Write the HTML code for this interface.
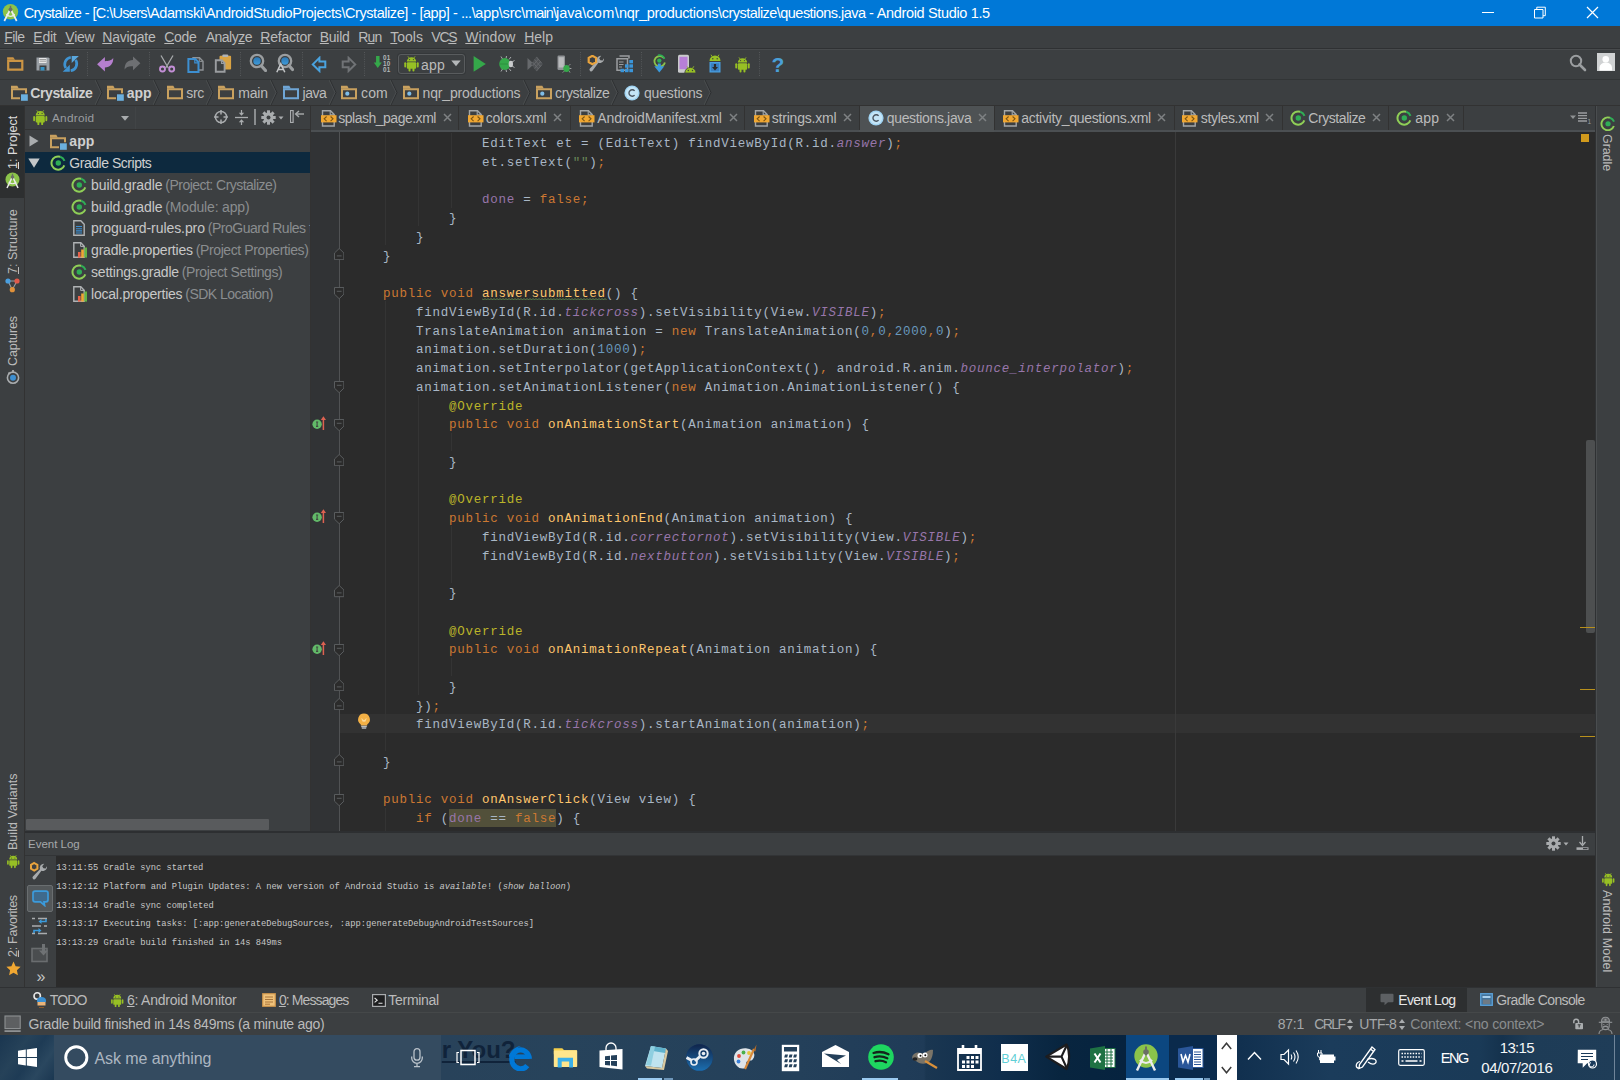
<!DOCTYPE html>
<html><head><meta charset="utf-8"><title>Crystalize - Android Studio 1.5</title>
<style>
html,body{margin:0;padding:0;}
body{width:1620px;height:1080px;overflow:hidden;position:relative;background:#3c3f41;font-family:"Liberation Sans",sans-serif;font-size:15px;color:#bbb;}
.t{position:absolute;white-space:pre;}
.r{position:absolute;}
u{text-decoration:underline;text-underline-offset:1px;text-decoration-thickness:1px;}

.code{font-family:"Liberation Mono",monospace;font-size:12.5px;letter-spacing:.75px;color:#a9b7c6;}
.cl{position:absolute;white-space:pre;line-height:18.75px;height:18.75px;}
.k{color:#cc7832}.f{color:#9876aa}.m{color:#ffc66d}.n{color:#6897bb}.a{color:#bbb529}.s{color:#6a8759}.i{font-style:italic}
.h{background:#52503a;padding:3.4px 0 1.3px;}
.w{}
</style></head><body>
<div class="r" style="left:0px;top:0px;width:1620px;height:26px;background:#0078d7;"></div>
<div class="r" style="left:0px;top:26px;width:1620px;height:1010px;background:#3c3f41;"></div>
<div class="r" style="left:0px;top:48px;width:1620px;height:1px;background:#2f3133;"></div>
<div class="r" style="left:0px;top:49px;width:1620px;height:1px;background:#484b4d;"></div>
<div class="r" style="left:0px;top:79px;width:1620px;height:1px;background:#323536;"></div>
<div class="r" style="left:0px;top:105px;width:1620px;height:1px;background:#323232;"></div>
<svg class="r" style="left:0px;top:0px;" width="24" height="26" viewBox="0 0 24 26"><circle cx="10.500" cy="11.800" r="7.700" fill="#8bc34a"/><path d="M10.500 9 L4.300 21 M10.500 9 L16.700 21" stroke="#ececec" stroke-width="1.700" fill="none"/><path d="M6.300 14.300 Q10.500 18.500 14.700 14.300" stroke="#ececec" stroke-width="1.300" fill="none"/><rect x="9.800" y="5.800" width="1.400" height="6" fill="#6b6f66"/><circle cx="10.500" cy="9.300" r="1.900" fill="#6b6f66"/></svg>
<span class="t" style="left:23.70px;top:4.18px;font-size:14.50px;line-height:19px;color:#fff;letter-spacing:-0.600px;">Crystalize - [C:\</span>
<span class="t" style="left:112.60px;top:4.18px;font-size:14.50px;line-height:19px;color:#fff;letter-spacing:-0.732px;">Users\</span>
<span class="t" style="left:150.10px;top:4.18px;font-size:14.50px;line-height:19px;color:#fff;letter-spacing:-0.466px;">Adamski\</span>
<span class="t" style="left:206.00px;top:4.18px;font-size:14.50px;line-height:19px;color:#fff;letter-spacing:-0.382px;">AndroidStudioProjects\</span>
<span class="t" style="left:345.10px;top:4.18px;font-size:14.50px;line-height:19px;color:#fff;letter-spacing:-0.447px;">Crystalize] - [app] - ...\</span>
<span class="t" style="left:475.30px;top:4.18px;font-size:14.50px;line-height:19px;color:#fff;letter-spacing:-0.230px;">app\</span>
<span class="t" style="left:502.60px;top:4.18px;font-size:14.50px;line-height:19px;color:#fff;letter-spacing:-0.214px;">src\</span>
<span class="t" style="left:525.10px;top:4.18px;font-size:14.50px;line-height:19px;color:#fff;letter-spacing:-0.911px;">main\</span>
<span class="t" style="left:556.00px;top:4.18px;font-size:14.50px;line-height:19px;color:#fff;letter-spacing:-0.066px;">java\</span>
<span class="t" style="left:586.30px;top:4.18px;font-size:14.50px;line-height:19px;color:#fff;letter-spacing:0.320px;">com\</span>
<span class="t" style="left:619.00px;top:4.18px;font-size:14.50px;line-height:19px;color:#fff;letter-spacing:-0.326px;">nqr_productions\</span>
<span class="t" style="left:721.80px;top:4.18px;font-size:14.50px;line-height:19px;color:#fff;letter-spacing:-0.542px;">crystalize\</span>
<span class="t" style="left:780.30px;top:4.18px;font-size:14.50px;line-height:19px;color:#fff;letter-spacing:-0.534px;">questions.java - </span>
<span class="t" style="left:876.80px;top:4.18px;font-size:14.50px;line-height:19px;color:#fff;letter-spacing:-0.350px;">Android Studio 1.5</span>
<svg class="r" style="left:1470px;top:0px;" width="150" height="26" viewBox="0 0 150 26"><path d="M12 12.5 H24" stroke="#fff" stroke-width="1"/>
<path d="M64.500 9.500 h8.500 v8.500 h-8.500 z M66.800 9.500 v-2.300 h8.500 v8.500 h-2.300" stroke="#fff" stroke-width="1" fill="none"/>
<path d="M117 7 l11 11 M128 7 l-11 11" stroke="#fff" stroke-width="1.2"/></svg>
<span class="t" style="left:4.30px;top:28.15px;font-size:14.00px;line-height:18px;color:#bbbbbb;letter-spacing:-0.615px;"><u>F</u>ile</span>
<span class="t" style="left:33.30px;top:28.15px;font-size:14.00px;line-height:18px;color:#bbbbbb;letter-spacing:-0.256px;"><u>E</u>dit</span>
<span class="t" style="left:65.30px;top:28.15px;font-size:14.00px;line-height:18px;color:#bbbbbb;letter-spacing:-0.248px;"><u>V</u>iew</span>
<span class="t" style="left:102.30px;top:28.15px;font-size:14.00px;line-height:18px;color:#bbbbbb;letter-spacing:-0.269px;"><u>N</u>avigate</span>
<span class="t" style="left:164.30px;top:28.15px;font-size:14.00px;line-height:18px;color:#bbbbbb;letter-spacing:-0.342px;"><u>C</u>ode</span>
<span class="t" style="left:205.80px;top:28.15px;font-size:14.00px;line-height:18px;color:#bbbbbb;letter-spacing:-0.530px;">Analy<u>z</u>e</span>
<span class="t" style="left:260.30px;top:28.15px;font-size:14.00px;line-height:18px;color:#bbbbbb;letter-spacing:-0.226px;"><u>R</u>efactor</span>
<span class="t" style="left:319.80px;top:28.15px;font-size:14.00px;line-height:18px;color:#bbbbbb;letter-spacing:-0.306px;"><u>B</u>uild</span>
<span class="t" style="left:358.30px;top:28.15px;font-size:14.00px;line-height:18px;color:#bbbbbb;letter-spacing:-0.861px;">R<u>u</u>n</span>
<span class="t" style="left:390.30px;top:28.15px;font-size:14.00px;line-height:18px;color:#bbbbbb;letter-spacing:-0.017px;"><u>T</u>ools</span>
<span class="t" style="left:431.30px;top:28.15px;font-size:14.00px;line-height:18px;color:#bbbbbb;letter-spacing:-1.229px;">VC<u>S</u></span>
<span class="t" style="left:465.30px;top:28.15px;font-size:14.00px;line-height:18px;color:#bbbbbb;letter-spacing:0.051px;"><u>W</u>indow</span>
<span class="t" style="left:524.30px;top:28.15px;font-size:14.00px;line-height:18px;color:#bbbbbb;letter-spacing:-0.048px;"><u>H</u>elp</span>
<svg class="r" style="left:7px;top:56px;" width="17" height="16" viewBox="0 0 17 16"><path d="M1.2 4.8 H15.3 V13.6 H1.2z" fill="#3c3f41" stroke="#cc9544" stroke-width="2.2"/><path d="M.1 1.200 h6.200 l1.700 2.600 H.1z" fill="#cc9544"/></svg>
<svg class="r" style="left:35px;top:56px;" width="16" height="16" viewBox="0 0 16 16"><path d="M1.5 1.5 h12 l1 1 v12 h-13 z" fill="#9aa0a6"/><rect x="4" y="2" width="7.5" height="5" fill="#e6e6e6"/><path d="M4.5 3.500 h6.500 M4.500 5.200 h6.500" stroke="#8a8a8a" stroke-width=".8"/><rect x="4.500" y="9.500" width="7" height="5" fill="#3c3f41"/><rect x="5.500" y="11" width="4" height="3.500" fill="#3592c4"/></svg>
<svg class="r" style="left:62px;top:55px;" width="17.5" height="18" viewBox="0 0 17.5 18"><path d="M8.800 2.200 C3.200 3.400 1.400 9 3.800 13.200" fill="none" stroke="#3f93d1" stroke-width="2.700"/><path d="M.7 16.800 h7.100 v-7z" fill="#3f93d1"/><path d="M8.700 15.800 C14.300 14.600 16.100 9 13.700 4.800" fill="none" stroke="#3f93d1" stroke-width="2.700"/><path d="M16.800 1 h-7.100 v7z" fill="#5aa7dd"/></svg>
<svg class="r" style="left:87px;top:52px;" width="1" height="24" viewBox="0 0 1 24"><path d="M.5 0 V24" stroke="#55585a" stroke-width="1" stroke-dasharray="1 1.300"/></svg>
<svg class="r" style="left:97px;top:56px;" width="17" height="16" viewBox="0 0 17 16"><path d="M.1 8.200 L7.900 1 V5.200 C11 5.200 15 4.500 16.200 1.800 C16.700 7.500 13 11.500 7.900 11.500 V15.400 Z" fill="#b67fcf"/></svg>
<svg class="r" style="left:124px;top:56px;" width="17" height="16" viewBox="0 0 17 16"><path d="M16.400 7.300 L9 .4 V4 C3.500 4 .6 7.500 .6 13.400 C2.500 10.500 5 10 9 10.300 V14.300 Z" fill="#6e7073"/></svg>
<svg class="r" style="left:149px;top:52px;" width="1" height="24" viewBox="0 0 1 24"><path d="M.5 0 V24" stroke="#55585a" stroke-width="1" stroke-dasharray="1 1.300"/></svg>
<svg class="r" style="left:158px;top:55px;" width="18" height="18" viewBox="0 0 18 18"><path d="M3 .5 L10.300 13 M15 .5 L7.700 13" stroke="#a6a9ab" stroke-width="1.300" fill="none"/><circle cx="4.500" cy="14" r="2.500" fill="none" stroke="#c38fd6" stroke-width="1.900"/><circle cx="13.700" cy="14" r="2.500" fill="none" stroke="#c38fd6" stroke-width="1.900"/></svg>
<svg class="r" style="left:186.5px;top:56px;" width="18" height="18" viewBox="0 0 18 18"><path d="M6 1.700 h6.500 l3.500 3.500 v8.800 h-10 z" fill="#3c3f41" stroke="#8f9396" stroke-width="1.400"/><path d="M12.300 1.900 v3.500 h3.500" fill="none" stroke="#8f9396" stroke-width="1"/><path d="M1.400 2.900 h6.800 l3.300 3.300 v9.900 h-10.100 z" fill="#3c3f41" stroke="#3d8fd1" stroke-width="2"/><path d="M7.800 3 v3.800 h3.800" fill="none" stroke="#3d8fd1" stroke-width="1.200"/></svg>
<svg class="r" style="left:214px;top:54px;" width="18" height="19" viewBox="0 0 18 19"><rect x="5.500" y="1.800" width="11.600" height="13.800" rx="1" fill="#d9a343"/><rect x="8.300" y=".5" width="6" height="2.400" rx="1" fill="#b0b3b5"/><path d="M1.800 6.300 h6 l2.800 2.800 v8.600 h-8.800 z" fill="#3c3f41" stroke="#9a9da0" stroke-width="1.900"/><path d="M7.500 6.500 v3 h3" fill="none" stroke="#9a9da0" stroke-width="1.100"/></svg>
<svg class="r" style="left:239.5px;top:52px;" width="1" height="24" viewBox="0 0 1 24"><path d="M.5 0 V24" stroke="#55585a" stroke-width="1" stroke-dasharray="1 1.300"/></svg>
<svg class="r" style="left:248.5px;top:53px;" width="18" height="19" viewBox="0 0 18 19"><defs><linearGradient id="lg1" x1="0" y1="0" x2="0" y2="1"><stop offset="0" stop-color="#2d78b5"/><stop offset="1" stop-color="#3f9ad8"/></linearGradient></defs><path d="M12.500 13 L16.500 17.500" stroke="#9b9ea0" stroke-width="3.200" stroke-linecap="round"/><circle cx="8" cy="8" r="6.200" fill="none" stroke="#9b9ea0" stroke-width="2.300"/><circle cx="8" cy="8" r="3.700" fill="url(#lg1)"/></svg>
<svg class="r" style="left:275.5px;top:53px;" width="18" height="20" viewBox="0 0 18 20"><defs><linearGradient id="lg2" x1="0" y1="0" x2="0" y2="1"><stop offset="0" stop-color="#2d78b5"/><stop offset="1" stop-color="#3f9ad8"/></linearGradient></defs><path d="M13 12.500 L16.500 16.500" stroke="#9b9ea0" stroke-width="3.200" stroke-linecap="round"/><circle cx="9" cy="8" r="6.200" fill="none" stroke="#9b9ea0" stroke-width="2.300"/><circle cx="9" cy="8" r="3.700" fill="url(#lg2)"/><path d="M.8 19.300 L4.800 10.800 L8.800 19.300 M2.200 16.500 H7.400" stroke="#c4c6c8" stroke-width="1.500" fill="none"/></svg>
<svg class="r" style="left:301.5px;top:52px;" width="1" height="24" viewBox="0 0 1 24"><path d="M.5 0 V24" stroke="#55585a" stroke-width="1" stroke-dasharray="1 1.300"/></svg>
<svg class="r" style="left:311px;top:56px;" width="17" height="17" viewBox="0 0 17 17"><path d="M1.800 8.400 L8.400 1.900 V5.600 H14.300 V11.200 H8.400 V14.900 Z" fill="none" stroke="#4aa3df" stroke-width="2" stroke-linejoin="miter"/></svg>
<svg class="r" style="left:339.5px;top:56px;" width="17" height="17" viewBox="0 0 17 17"><path d="M15.200 8.400 L8.600 1.900 V5.600 H2.700 V11.200 H8.600 V14.900 Z" fill="none" stroke="#707376" stroke-width="2"/></svg>
<svg class="r" style="left:364px;top:52px;" width="1" height="24" viewBox="0 0 1 24"><path d="M.5 0 V24" stroke="#55585a" stroke-width="1" stroke-dasharray="1 1.300"/></svg>
<svg class="r" style="left:373px;top:55px;" width="10" height="14" viewBox="0 0 10 14"><path d="M4.800 1 V8.500" stroke="#35a84a" stroke-width="3.500"/><path d="M.8 7.500 h8 l-4 5.500z" fill="#35a84a"/></svg>
<span class="t" style="left:383.00px;top:54.42px;font-size:6.30px;line-height:8px;color:#b4b7b9;font-weight:bold;letter-spacing:.3px;">01</span>
<span class="t" style="left:383.00px;top:60.12px;font-size:6.30px;line-height:8px;color:#b4b7b9;font-weight:bold;letter-spacing:.3px;">10</span>
<span class="t" style="left:383.00px;top:65.82px;font-size:6.30px;line-height:8px;color:#b4b7b9;font-weight:bold;letter-spacing:.3px;">01</span>
<div class="r" style="left:397.5px;top:53.5px;width:67.5px;height:20.5px;background:#3c3f41;border:1px solid #595c5e;border-radius:3px;box-sizing:border-box;box-shadow:0 0 0 1px #35383a;"></div>
<svg class="r" style="left:402.5px;top:55px;" width="17" height="17" viewBox="0 0 16 16"><g fill="#97c024"><path d="M3.6 6.2 a4.4 4.2 0 0 1 8.8 0 z"/><rect x="3.6" y="6.8" width="8.8" height="6.2" rx="1"/><rect x="1.2" y="6.8" width="1.8" height="5" rx=".9"/><rect x="13" y="6.8" width="1.8" height="5" rx=".9"/><rect x="5.2" y="12" width="1.9" height="3.6" rx=".9"/><rect x="8.9" y="12" width="1.9" height="3.6" rx=".9"/><path d="M4.6 1.2 l1.2 1.8 M11.4 1.2 l-1.2 1.8" stroke="#97c024" stroke-width=".7"/></g><circle cx="6.2" cy="4.3" r=".55" fill="#3c3f41"/><circle cx="9.8" cy="4.3" r=".55" fill="#3c3f41"/></svg>
<span class="t" style="left:421.00px;top:55.65px;font-size:14.00px;line-height:18px;color:#bbbbbb;letter-spacing:0.180px;">app</span>
<svg class="r" style="left:450.5px;top:60px;" width="10" height="7" viewBox="0 0 10 7"><path d="M0.3 0.5 h9.400 l-4.700 5.800z" fill="#b4b7b9"/></svg>
<svg class="r" style="left:473px;top:56px;" width="14" height="16" viewBox="0 0 14 16"><path d="M0.600 0 L12.800 7.900 L0.600 15.800z" fill="#35a84a"/></svg>
<svg class="r" style="left:498px;top:55px;" width="18" height="18" viewBox="0 0 18 18"><path d="M4.500 4 L3 1.500 M8 3.500 L8.500 1 M11 4.500 L13 2 M4.500 14 L3 16.500 M8 14.500 L8.500 17 M11 13.500 L13 16 M14 7 L16.500 5.500 M14 11 L16.500 12.500" stroke="#a9acae" stroke-width="1"/><ellipse cx="6.800" cy="9" rx="5.600" ry="5.900" fill="#35a84a"/><path d="M1.500 9 h10" stroke="#2b8a3c" stroke-width=".8"/><ellipse cx="12.800" cy="9" rx="2.200" ry="3.300" fill="#c9cbcc"/></svg>
<svg class="r" style="left:527px;top:56px;" width="17" height="16" viewBox="0 0 17 16"><path d="M0.500 2 L7 8 L0.500 14z" fill="#66696c"/><path d="M9.500 .5 l6.500 7.500 l-6.500 7.500 l-5.500-7.500z" fill="#4d5053"/><path d="M5.500 6 l6 7 M7.500 3.500 l6 7 M9.500 1 l5 6 M5.500 10 l6 -7 M7.500 12.500 l6 -7 M9.500 15 l5 -6" stroke="#66696c" stroke-width=".9"/></svg>
<svg class="r" style="left:556px;top:55px;" width="17" height="18" viewBox="0 0 17 18"><rect x="1.500" y="0.500" width="7.500" height="14.500" rx="1.200" fill="#8f9295"/><rect x="2.600" y="2.200" width="5.300" height="10.300" fill="#b9bbbd"/><ellipse cx="10.500" cy="13.500" rx="3.200" ry="3.600" fill="#35a84a"/><path d="M8 10.500 l-1.200-1.300 M13 10.500 l1.300-1.300 M13.600 13.500 h1.800 M8 16.300 l-1.200 1.200 M13 16.300 l1.300 1.200" stroke="#a9acae" stroke-width=".9"/></svg>
<svg class="r" style="left:579.5px;top:52px;" width="1" height="24" viewBox="0 0 1 24"><path d="M.5 0 V24" stroke="#55585a" stroke-width="1" stroke-dasharray="1 1.300"/></svg>
<svg class="r" style="left:587px;top:55px;" width="19" height="18" viewBox="0 0 19 18"><path d="M17 3.200 a4.200 4.200 0 0 1 -5.600 4.600 L5.500 15.800 a1.600 1.600 0 0 1 -2.600 -2.200 L10 6.300 a4.200 4.200 0 0 1 4.200 -5.600 l-2 2.600 l1.200 2 l2.200 0.300 z" fill="#a8abad"/><path d="M5.400 .8 l3.700 2.100 v4.300 l-3.700 2.100 l-3.700-2.100 v-4.300z" fill="#3c3f41" stroke="#e8a33d" stroke-width="2.200"/></svg>
<svg class="r" style="left:616px;top:55px;" width="18" height="18" viewBox="0 0 18 18"><path d="M3.500 1 h9.500 v2.500 M1 3.800 h10.500 v11.500 h-10.500z" fill="#3c3f41" stroke="#9a9da0" stroke-width="1.500"/><path d="M3 7 h4.500 M3 9.500 h4.500 M3 12 h3" stroke="#9a9da0" stroke-width="1.100"/><g fill="#3a95d9"><rect x="13.300" y="5" width="3.700" height="3.300"/><rect x="9" y="9.300" width="3.500" height="3.400"/><rect x="13.300" y="9.300" width="3.700" height="3.400"/><rect x="4.500" y="13.800" width="3.500" height="3.400"/><rect x="9" y="13.800" width="3.500" height="3.400"/><rect x="13.300" y="13.800" width="3.700" height="3.400"/></g></svg>
<svg class="r" style="left:641px;top:52px;" width="1" height="24" viewBox="0 0 1 24"><path d="M.5 0 V24" stroke="#55585a" stroke-width="1" stroke-dasharray="1 1.300"/></svg>
<svg class="r" style="left:651px;top:54px;" width="17" height="19" viewBox="0 0 17 19"><path d="M13 4.200 a5.300 5.300 0 1 0 .9 4.300" fill="none" stroke="#8bc34a" stroke-width="1.800"/><path d="M7 1.400 a5.300 5.300 0 0 1 6.400 3.500" fill="none" stroke="#2fae56" stroke-width="1.800"/><circle cx="8.300" cy="6.600" r="2.200" fill="#2fae56"/><path d="M8.300 9.500 V13.500" stroke="#3b9bdc" stroke-width="3"/><path d="M3.300 12.300 h10 L8.300 18.500z" fill="#3b9bdc"/></svg>
<svg class="r" style="left:677px;top:54px;" width="20" height="19" viewBox="0 0 20 19"><rect x="1" y="0.700" width="11" height="18" rx="1.500" fill="#c9cbcc"/><rect x="2.500" y="2.800" width="8" height="12.400" fill="#b77fd8"/><path d="M7.800 19 a5.600 5.600 0 0 1 11.200 0z" fill="#97c024" stroke="#3c3f41" stroke-width=".8"/><path d="M10 12.300 l1.200 2 M16.800 12.300 l-1.200 2" stroke="#97c024" stroke-width=".9"/><circle cx="11.300" cy="16.500" r=".7" fill="#3c3f41"/><circle cx="15.500" cy="16.500" r=".7" fill="#3c3f41"/></svg>
<svg class="r" style="left:708px;top:54px;" width="14" height="19" viewBox="0 0 14 19"><path d="M1.500 7 a5.500 5.500 0 0 1 11 0z" fill="#97c024"/><path d="M3 .7 l1.200 2 M11 .7 l-1.200 2" stroke="#97c024" stroke-width=".9"/><circle cx="4.800" cy="4.800" r=".7" fill="#3c3f41"/><circle cx="9.200" cy="4.800" r=".7" fill="#3c3f41"/><rect x="1.500" y="8" width="11" height="10.500" fill="#4a9fe0"/><rect x="2.800" y="9.300" width="8.400" height="8" fill="#3a7fc0"/><path d="M7 10 v3.500" stroke="#2b2b2b" stroke-width="2.200"/><path d="M4 13 h6 L7 16.500z" fill="#2b2b2b"/></svg>
<svg class="r" style="left:734px;top:55.5px;" width="17" height="17" viewBox="0 0 16 16"><g fill="#97c024"><path d="M3.6 6.2 a4.4 4.2 0 0 1 8.8 0 z"/><rect x="3.6" y="6.8" width="8.8" height="6.2" rx="1"/><rect x="1.2" y="6.8" width="1.8" height="5" rx=".9"/><rect x="13" y="6.8" width="1.8" height="5" rx=".9"/><rect x="5.2" y="12" width="1.9" height="3.6" rx=".9"/><rect x="8.9" y="12" width="1.9" height="3.6" rx=".9"/><path d="M4.6 1.2 l1.2 1.8 M11.4 1.2 l-1.2 1.8" stroke="#97c024" stroke-width=".7"/></g><circle cx="6.2" cy="4.3" r=".55" fill="#3c3f41"/><circle cx="9.8" cy="4.3" r=".55" fill="#3c3f41"/></svg>
<svg class="r" style="left:759px;top:52px;" width="1" height="24" viewBox="0 0 1 24"><path d="M.5 0 V24" stroke="#55585a" stroke-width="1" stroke-dasharray="1 1.300"/></svg>
<span class="t" style="left:771.50px;top:51.22px;font-size:21.00px;line-height:27px;color:#4a9fd8;font-weight:bold;">?</span>
<svg class="r" style="left:1569px;top:54px;" width="18" height="18" viewBox="0 0 18 18"><path d="M10.500 10.500 L16 16" stroke="#9b9ea0" stroke-width="2.600" stroke-linecap="round"/><circle cx="7" cy="7" r="5.200" fill="none" stroke="#9b9ea0" stroke-width="2"/></svg>
<div class="r" style="left:1597px;top:53.3px;width:17.8px;height:17.8px;background:#d0d2d3;"></div>
<svg class="r" style="left:1597px;top:53.3px;" width="17.8" height="17.8" viewBox="0 0 17.8 17.8"><circle cx="8.750" cy="6.300" r="3.300" fill="#fff"/><path d="M2.500 17.500 v-3 a6.250 5 0 0 1 12.500 0 v3z" fill="#fff"/></svg>
<svg class="r" style="left:10.5px;top:85px;" width="17" height="16" viewBox="0 0 17 16"><path d="M1 4.200 H15 V13.200 H1z" fill="none" stroke="#c9a15f" stroke-width="2"/><path d="M0 .8 h6.300 l1.500 2.600 H0z" fill="#c9a15f"/><rect x="9" y="8.300" width="8" height="7.700" fill="#3c3f41"/><rect x="10" y="9.300" width="6.800" height="6.500" fill="#6bb0df"/></svg>
<span class="t" style="left:30.30px;top:84.15px;font-size:14.00px;line-height:18px;color:#d0d0d0;font-weight:bold;letter-spacing:-0.404px;">Crystalize</span>
<svg class="r" style="left:94.5px;top:80px;" width="8" height="25" viewBox="0 0 8 25"><path d="M1 0 L7 12.5 L1 25" fill="none" stroke="#2d2f31" stroke-width="1"/><path d="M0 0 L6 12.5 L0 25" fill="none" stroke="#4a4d4f" stroke-width="1"/></svg>
<svg class="r" style="left:107px;top:85px;" width="17" height="16" viewBox="0 0 17 16"><path d="M1 4.200 H15 V13.200 H1z" fill="none" stroke="#c9a15f" stroke-width="2"/><path d="M0 .8 h6.300 l1.500 2.600 H0z" fill="#c9a15f"/><rect x="9" y="8.300" width="8" height="7.700" fill="#3c3f41"/><rect x="10" y="9.300" width="6.800" height="6.500" fill="#6bb0df"/></svg>
<span class="t" style="left:126.80px;top:84.15px;font-size:14.00px;line-height:18px;color:#d0d0d0;font-weight:bold;letter-spacing:-0.097px;">app</span>
<svg class="r" style="left:153px;top:80px;" width="8" height="25" viewBox="0 0 8 25"><path d="M1 0 L7 12.5 L1 25" fill="none" stroke="#2d2f31" stroke-width="1"/><path d="M0 0 L6 12.5 L0 25" fill="none" stroke="#4a4d4f" stroke-width="1"/></svg>
<svg class="r" style="left:167px;top:85px;" width="17" height="16" viewBox="0 0 17 16"><path d="M1 4.200 H15 V13.200 H1z" fill="none" stroke="#c9a15f" stroke-width="2"/><path d="M0 .8 h6.300 l1.500 2.600 H0z" fill="#c9a15f"/></svg>
<span class="t" style="left:186.30px;top:84.15px;font-size:14.00px;line-height:18px;color:#bbb;letter-spacing:-0.354px;">src</span>
<svg class="r" style="left:205.5px;top:80px;" width="8" height="25" viewBox="0 0 8 25"><path d="M1 0 L7 12.5 L1 25" fill="none" stroke="#2d2f31" stroke-width="1"/><path d="M0 0 L6 12.5 L0 25" fill="none" stroke="#4a4d4f" stroke-width="1"/></svg>
<svg class="r" style="left:218px;top:85px;" width="17" height="16" viewBox="0 0 17 16"><path d="M1 4.200 H15 V13.200 H1z" fill="none" stroke="#c9a15f" stroke-width="2"/><path d="M0 .8 h6.300 l1.500 2.600 H0z" fill="#c9a15f"/></svg>
<span class="t" style="left:238.30px;top:84.15px;font-size:14.00px;line-height:18px;color:#bbb;letter-spacing:-0.186px;">main</span>
<svg class="r" style="left:269.5px;top:80px;" width="8" height="25" viewBox="0 0 8 25"><path d="M1 0 L7 12.5 L1 25" fill="none" stroke="#2d2f31" stroke-width="1"/><path d="M0 0 L6 12.5 L0 25" fill="none" stroke="#4a4d4f" stroke-width="1"/></svg>
<svg class="r" style="left:283px;top:85px;" width="17" height="16" viewBox="0 0 17 16"><path d="M1 4.200 H15 V13.200 H1z" fill="none" stroke="#6fa6d6" stroke-width="2"/><path d="M0 .8 h6.300 l1.500 2.600 H0z" fill="#6fa6d6"/></svg>
<span class="t" style="left:302.60px;top:84.15px;font-size:14.00px;line-height:18px;color:#bbb;letter-spacing:-0.471px;">java</span>
<svg class="r" style="left:329px;top:80px;" width="8" height="25" viewBox="0 0 8 25"><path d="M1 0 L7 12.5 L1 25" fill="none" stroke="#2d2f31" stroke-width="1"/><path d="M0 0 L6 12.5 L0 25" fill="none" stroke="#4a4d4f" stroke-width="1"/></svg>
<svg class="r" style="left:341.3px;top:85px;" width="17" height="16" viewBox="0 0 17 16"><path d="M1 4.200 H15 V13.200 H1z" fill="none" stroke="#c9a15f" stroke-width="2"/><path d="M0 .8 h6.300 l1.500 2.600 H0z" fill="#c9a15f"/><circle cx="6.300" cy="8.700" r="2.100" fill="#7fbde8"/></svg>
<span class="t" style="left:361.00px;top:84.15px;font-size:14.00px;line-height:18px;color:#bbb;letter-spacing:0.151px;">com</span>
<svg class="r" style="left:389.7px;top:80px;" width="8" height="25" viewBox="0 0 8 25"><path d="M1 0 L7 12.5 L1 25" fill="none" stroke="#2d2f31" stroke-width="1"/><path d="M0 0 L6 12.5 L0 25" fill="none" stroke="#4a4d4f" stroke-width="1"/></svg>
<svg class="r" style="left:403px;top:85px;" width="17" height="16" viewBox="0 0 17 16"><path d="M1 4.200 H15 V13.200 H1z" fill="none" stroke="#c9a15f" stroke-width="2"/><path d="M0 .8 h6.300 l1.500 2.600 H0z" fill="#c9a15f"/><circle cx="6.300" cy="8.700" r="2.100" fill="#7fbde8"/></svg>
<span class="t" style="left:422.60px;top:84.15px;font-size:14.00px;line-height:18px;color:#bbb;letter-spacing:-0.173px;">nqr_productions</span>
<svg class="r" style="left:523px;top:80px;" width="8" height="25" viewBox="0 0 8 25"><path d="M1 0 L7 12.5 L1 25" fill="none" stroke="#2d2f31" stroke-width="1"/><path d="M0 0 L6 12.5 L0 25" fill="none" stroke="#4a4d4f" stroke-width="1"/></svg>
<svg class="r" style="left:535.5px;top:85px;" width="17" height="16" viewBox="0 0 17 16"><path d="M1 4.200 H15 V13.200 H1z" fill="none" stroke="#c9a15f" stroke-width="2"/><path d="M0 .8 h6.300 l1.500 2.600 H0z" fill="#c9a15f"/><circle cx="6.300" cy="8.700" r="2.100" fill="#7fbde8"/></svg>
<span class="t" style="left:555.10px;top:84.15px;font-size:14.00px;line-height:18px;color:#bbb;letter-spacing:-0.404px;">crystalize</span>
<svg class="r" style="left:611.3px;top:80px;" width="8" height="25" viewBox="0 0 8 25"><path d="M1 0 L7 12.5 L1 25" fill="none" stroke="#2d2f31" stroke-width="1"/><path d="M0 0 L6 12.5 L0 25" fill="none" stroke="#4a4d4f" stroke-width="1"/></svg>
<svg class="r" style="left:624px;top:84.5px;" width="16" height="16" viewBox="0 0 16 16"><circle cx="8" cy="8" r="7.6" fill="#9fd3f2"/><circle cx="8" cy="8" r="6.2" fill="#c4e5f7"/><path d="M10.6 5.9 a3.2 3.2 0 1 0 0 4.2" fill="none" stroke="#4a5560" stroke-width="1.4"/></svg>
<span class="t" style="left:644.00px;top:84.15px;font-size:14.00px;line-height:18px;color:#bbb;letter-spacing:-0.170px;">questions</span>
<svg class="r" style="left:703.8px;top:80px;" width="8" height="25" viewBox="0 0 8 25"><path d="M1 0 L7 12.5 L1 25" fill="none" stroke="#2d2f31" stroke-width="1"/><path d="M0 0 L6 12.5 L0 25" fill="none" stroke="#4a4d4f" stroke-width="1"/></svg>
<div class="r" style="left:0px;top:106px;width:24px;height:882px;background:#3c3f41;"></div>
<div class="r" style="left:24px;top:106px;width:1px;height:882px;background:#323232;"></div>
<div class="r" style="left:0px;top:106px;width:24px;height:92px;background:#2d2f30;"></div>
<span class="t" style="left:6.50px;top:169.00px;font-size:12.5px;line-height:12.5px;color:#dcdcdc;letter-spacing:0.060px;transform-origin:0 0;transform:rotate(-90deg);"><u>1</u>: Project</span>
<svg class="r" style="left:4px;top:171px;" width="17" height="19" viewBox="0 0 17 19"><circle cx="8.500" cy="8.500" r="7" fill="#8bc34a"/><path d="M8.500 5.500 L3 17 M8.500 5.500 L14 17" stroke="#ececec" stroke-width="1.500" fill="none"/><path d="M4.800 11 Q8.500 14.500 12.200 11" stroke="#ececec" stroke-width="1.100" fill="none"/><rect x="7.900" y="2.800" width="1.200" height="5.500" fill="#6b6f66"/><circle cx="8.500" cy="6" r="1.700" fill="#6b6f66"/></svg>
<span class="t" style="left:6.50px;top:274.00px;font-size:12.5px;line-height:12.5px;color:#bbb;letter-spacing:0.007px;transform-origin:0 0;transform:rotate(-90deg);"><u>7</u>: Structure</span>
<svg class="r" style="left:5px;top:277px;" width="15" height="16" viewBox="0 0 15 16"><path d="M3 4 L12 4 M3 4 L7.3 12.700 M12 4 L7.300 12.700" stroke="#9a9da0" stroke-width="1.100"/><circle cx="3" cy="4" r="2.600" fill="#4a9fe0"/><circle cx="12" cy="4" r="2.600" fill="#e05a4a"/><circle cx="7.300" cy="12.700" r="2.600" fill="#e0913a"/></svg>
<span class="t" style="left:6.50px;top:365.70px;font-size:12.5px;line-height:12.5px;color:#bbb;letter-spacing:-0.090px;transform-origin:0 0;transform:rotate(-90deg);">Captures</span>
<svg class="r" style="left:5.5px;top:368.5px;" width="14" height="16" viewBox="0 0 14 16"><circle cx="7" cy="8.700" r="5.600" fill="none" stroke="#a9acae" stroke-width="1.600"/><circle cx="7" cy="8.700" r="3" fill="#3d8fd1"/><path d="M7 1 v2 M2.500 3.500 l1.300 1.300" stroke="#a9acae" stroke-width="1.800"/></svg>
<span class="t" style="left:6.50px;top:850.40px;font-size:12.5px;line-height:12.5px;color:#bbb;letter-spacing:0.029px;transform-origin:0 0;transform:rotate(-90deg);">Build Variants</span>
<svg class="r" style="left:5.5px;top:854px;" width="14.5" height="14.5" viewBox="0 0 16 16"><g fill="#97c024"><path d="M3.6 6.2 a4.4 4.2 0 0 1 8.8 0 z"/><rect x="3.6" y="6.8" width="8.8" height="6.2" rx="1"/><rect x="1.2" y="6.8" width="1.8" height="5" rx=".9"/><rect x="13" y="6.8" width="1.8" height="5" rx=".9"/><rect x="5.2" y="12" width="1.9" height="3.6" rx=".9"/><rect x="8.9" y="12" width="1.9" height="3.6" rx=".9"/><path d="M4.6 1.2 l1.2 1.8 M11.4 1.2 l-1.2 1.8" stroke="#97c024" stroke-width=".7"/></g><circle cx="6.2" cy="4.3" r=".55" fill="#3c3f41"/><circle cx="9.8" cy="4.3" r=".55" fill="#3c3f41"/></svg>
<span class="t" style="left:6.50px;top:956.80px;font-size:12.5px;line-height:12.5px;color:#bbb;letter-spacing:-0.292px;transform-origin:0 0;transform:rotate(-90deg);"><u>2</u>: Favorites</span>
<svg class="r" style="left:5.5px;top:960.5px;" width="15" height="15" viewBox="0 0 15 15"><path d="M7.500 .5 l2.100 4.700 5 .6 -3.700 3.400 1 5 L7.500 11.700 3.100 14.200 l1-5 L.4 5.800 l5-.6z" fill="#f0a732"/></svg>
<div class="r" style="left:1595px;top:106px;width:1px;height:882px;background:#2f3133;"></div>
<div class="r" style="left:1596px;top:106px;width:1px;height:882px;background:#4a4d4f;"></div>
<div class="r" style="left:1597px;top:106px;width:23px;height:882px;background:#3c3f41;"></div>
<svg class="r" style="left:1600px;top:115.5px;" width="15.5" height="15.5" viewBox="0 0 16 16"><path d="M14.300 10.300 A6.600 6.600 0 1 1 10.200 1.800" fill="none" stroke="#8fcf57" stroke-width="2"/><path d="M10.200 1.800 A6.600 6.600 0 0 1 14.500 5.800" fill="none" stroke="#2fae56" stroke-width="2"/><circle cx="8.300" cy="8" r="2.700" fill="#2fae56"/></svg>
<span class="t" style="left:1612.60px;top:134.00px;font-size:12.5px;line-height:12.5px;color:#bbb;letter-spacing:-0.086px;transform-origin:0 0;transform:rotate(90deg);">Gradle</span>
<svg class="r" style="left:1600.5px;top:872px;" width="14.5" height="14.5" viewBox="0 0 16 16"><g fill="#97c024"><path d="M3.6 6.2 a4.4 4.2 0 0 1 8.8 0 z"/><rect x="3.6" y="6.8" width="8.8" height="6.2" rx="1"/><rect x="1.2" y="6.8" width="1.8" height="5" rx=".9"/><rect x="13" y="6.8" width="1.8" height="5" rx=".9"/><rect x="5.2" y="12" width="1.9" height="3.6" rx=".9"/><rect x="8.9" y="12" width="1.9" height="3.6" rx=".9"/><path d="M4.6 1.2 l1.2 1.8 M11.4 1.2 l-1.2 1.8" stroke="#97c024" stroke-width=".7"/></g><circle cx="6.2" cy="4.3" r=".55" fill="#3c3f41"/><circle cx="9.8" cy="4.3" r=".55" fill="#3c3f41"/></svg>
<span class="t" style="left:1612.60px;top:890.00px;font-size:12.5px;line-height:12.5px;color:#bbb;letter-spacing:0.146px;transform-origin:0 0;transform:rotate(90deg);">Android Model</span>
<div class="r" style="left:25px;top:106px;width:285px;height:24px;background:#3c3f41;"></div>
<div class="r" style="left:25px;top:129px;width:285px;height:1px;background:#323232;"></div>
<svg class="r" style="left:32.3px;top:108.7px;" width="16.5" height="16.5" viewBox="0 0 16 16"><g fill="#97c024"><path d="M3.6 6.2 a4.4 4.2 0 0 1 8.8 0 z"/><rect x="3.6" y="6.8" width="8.8" height="6.2" rx="1"/><rect x="1.2" y="6.8" width="1.8" height="5" rx=".9"/><rect x="13" y="6.8" width="1.8" height="5" rx=".9"/><rect x="5.2" y="12" width="1.9" height="3.6" rx=".9"/><rect x="8.9" y="12" width="1.9" height="3.6" rx=".9"/><path d="M4.6 1.2 l1.2 1.8 M11.4 1.2 l-1.2 1.8" stroke="#97c024" stroke-width=".7"/></g><circle cx="6.2" cy="4.3" r=".55" fill="#3c3f41"/><circle cx="9.8" cy="4.3" r=".55" fill="#3c3f41"/></svg>
<span class="t" style="left:52.00px;top:110.51px;font-size:11.80px;line-height:15px;color:#9a9da0;letter-spacing:0.247px;">Android</span>
<svg class="r" style="left:120.5px;top:115.5px;" width="8" height="5" viewBox="0 0 8 5"><path d="M0 0 h8 l-4 4.8z" fill="#a9acae"/></svg>
<div class="r" style="left:135px;top:107px;width:1px;height:22px;background:#414446;"></div>
<svg class="r" style="left:213.5px;top:110px;" width="14" height="14" viewBox="0 0 14 14"><circle cx="7" cy="7" r="5.6" fill="none" stroke="#a9acae" stroke-width="1.5"/><path d="M7 0 v4.5 M7 9.5 v4.5 M0 7 h4.5 M9.5 7 h4.5" stroke="#a9acae" stroke-width="1.5"/></svg>
<svg class="r" style="left:235px;top:109.5px;" width="13" height="15" viewBox="0 0 13 15"><path d="M0 7.5 h13" stroke="#a9acae" stroke-width="1.3"/><path d="M6.5 0 v4 M6.5 15 v-4" stroke="#a9acae" stroke-width="1.2"/><path d="M3.8 2.8 h5.4 l-2.7 3z M3.8 12.2 h5.4 l-2.7 -3z" fill="#a9acae"/></svg>
<div class="r" style="left:254px;top:109px;width:2px;height:16px;background:#8a8d8f;"></div>
<svg class="r" style="left:261px;top:109.5px;" width="23" height="15" viewBox="0 0 23 15"><g transform="translate(7.500 7.500)" fill="#a9acae"><circle r="5"/><rect x="-1.500" y="-7.200" width="3" height="3.400" transform="rotate(0)"/><rect x="-1.500" y="-7.200" width="3" height="3.400" transform="rotate(45)"/><rect x="-1.500" y="-7.200" width="3" height="3.400" transform="rotate(90)"/><rect x="-1.500" y="-7.200" width="3" height="3.400" transform="rotate(135)"/><rect x="-1.500" y="-7.200" width="3" height="3.400" transform="rotate(180)"/><rect x="-1.500" y="-7.200" width="3" height="3.400" transform="rotate(225)"/><rect x="-1.500" y="-7.200" width="3" height="3.400" transform="rotate(270)"/><rect x="-1.500" y="-7.200" width="3" height="3.400" transform="rotate(315)"/><circle r="2" fill="#3c3f41"/></g><path d="M17.500 6.500 h5 l-2.500 3z" fill="#a9acae"/></svg>
<svg class="r" style="left:290px;top:110px;" width="15" height="13" viewBox="0 0 15 13"><rect x="0.5" y="0.5" width="2.6" height="12" fill="none" stroke="#a9acae" stroke-width="1.2"/><path d="M6 4 h8" stroke="#a9acae" stroke-width="1.4"/><path d="M9 1 L5.6 4 L9 7" fill="none" stroke="#a9acae" stroke-width="1.4"/></svg>
<div class="r" style="left:25px;top:130px;width:285px;height:688px;background:#3c3f41;"></div>
<div class="r" style="left:25px;top:151.8px;width:285px;height:21.2px;background:#0d293e;"></div>
<svg class="r" style="left:29px;top:134.5px;" width="10" height="12" viewBox="0 0 10 12"><path d="M.5 .5 L9.5 6 L.5 11.5z" fill="#a9acae"/></svg>
<svg class="r" style="left:28px;top:158px;" width="12" height="10" viewBox="0 0 12 10"><path d="M.3 .5 h11.4 L6 9.7z" fill="#c4c7c9"/></svg>
<svg class="r" style="left:49.5px;top:133.5px;" width="17" height="16" viewBox="0 0 17 16"><path d="M1 4.200 H15 V13.200 H1z" fill="none" stroke="#c9a15f" stroke-width="2"/><path d="M0 .8 h6.300 l1.500 2.600 H0z" fill="#c9a15f"/><rect x="9" y="8.300" width="8" height="7.700" fill="#3c3f41"/><rect x="10" y="9.300" width="6.800" height="6.500" fill="#6bb0df"/></svg>
<span class="t" style="left:69.30px;top:132.15px;font-size:14.00px;line-height:18px;color:#d0d0d0;font-weight:bold;letter-spacing:0.070px;">app</span>
<svg class="r" style="left:49.5px;top:155px;" width="16" height="16" viewBox="0 0 16 16"><path d="M14.300 10.300 A6.600 6.600 0 1 1 10.200 1.800" fill="none" stroke="#8fcf57" stroke-width="2"/><path d="M10.200 1.800 A6.600 6.600 0 0 1 14.500 5.800" fill="none" stroke="#2fae56" stroke-width="2"/><circle cx="8.300" cy="8" r="2.700" fill="#2fae56"/></svg>
<span class="t" style="left:69.30px;top:154.15px;font-size:14.00px;line-height:18px;color:#d0d0d0;letter-spacing:-0.471px;">Gradle Scripts</span>
<div class="r" style="left:25px;top:130px;width:285px;height:688px;overflow:hidden">
<span class="t" style="left:66.05px;top:46.15px;font-size:14.00px;line-height:18px;color:#c8c8c8;letter-spacing:-0.086px;">build.gradle</span>
<span class="t" style="left:140.30px;top:46.15px;font-size:14.00px;line-height:18px;color:#8a8d8f;letter-spacing:-0.525px;">(Project: Crystalize)</span>
<span class="t" style="left:66.05px;top:67.90px;font-size:14.00px;line-height:18px;color:#c8c8c8;letter-spacing:-0.086px;">build.gradle</span>
<span class="t" style="left:140.30px;top:67.90px;font-size:14.00px;line-height:18px;color:#8a8d8f;letter-spacing:-0.175px;">(Module: app)</span>
<span class="t" style="left:66.05px;top:89.40px;font-size:14.00px;line-height:18px;color:#c8c8c8;letter-spacing:-0.073px;">proguard-rules.pro</span>
<span class="t" style="left:182.80px;top:89.40px;font-size:14.00px;line-height:18px;color:#8a8d8f;letter-spacing:-0.484px;">(ProGuard Rules f</span>
<span class="t" style="left:66.05px;top:111.15px;font-size:14.00px;line-height:18px;color:#c8c8c8;letter-spacing:-0.189px;">gradle.properties</span>
<span class="t" style="left:170.80px;top:111.15px;font-size:14.00px;line-height:18px;color:#8a8d8f;letter-spacing:-0.400px;">(Project Properties)</span>
<span class="t" style="left:66.05px;top:132.90px;font-size:14.00px;line-height:18px;color:#c8c8c8;letter-spacing:-0.214px;">settings.gradle</span>
<span class="t" style="left:156.80px;top:132.90px;font-size:14.00px;line-height:18px;color:#8a8d8f;letter-spacing:-0.376px;">(Project Settings)</span>
<span class="t" style="left:66.05px;top:154.65px;font-size:14.00px;line-height:18px;color:#c8c8c8;letter-spacing:-0.224px;">local.properties</span>
<span class="t" style="left:160.30px;top:154.65px;font-size:14.00px;line-height:18px;color:#8a8d8f;letter-spacing:-0.524px;">(SDK Location)</span>
</div>
<svg class="r" style="left:71px;top:177px;" width="16" height="16" viewBox="0 0 16 16"><path d="M14.300 10.300 A6.600 6.600 0 1 1 10.200 1.800" fill="none" stroke="#8fcf57" stroke-width="2"/><path d="M10.200 1.800 A6.600 6.600 0 0 1 14.500 5.800" fill="none" stroke="#2fae56" stroke-width="2"/><circle cx="8.300" cy="8" r="2.700" fill="#2fae56"/></svg>
<svg class="r" style="left:71px;top:198.75px;" width="16" height="16" viewBox="0 0 16 16"><path d="M14.300 10.300 A6.600 6.600 0 1 1 10.200 1.800" fill="none" stroke="#8fcf57" stroke-width="2"/><path d="M10.200 1.800 A6.600 6.600 0 0 1 14.500 5.800" fill="none" stroke="#2fae56" stroke-width="2"/><circle cx="8.300" cy="8" r="2.700" fill="#2fae56"/></svg>
<svg class="r" style="left:72.5px;top:220.25px;" width="12" height="16" viewBox="0 0 12 16"><path d="M.8 .8 h7 l3.4 3.4 V15.2 H.8z" fill="none" stroke="#b0b3b5" stroke-width="1.4"/><path d="M3 6.5 h6 M3 8.7 h6 M3 10.9 h6 M3 13 h6" stroke="#3d8fd1" stroke-width="1.1"/></svg>
<svg class="r" style="left:72.5px;top:242px;" width="16" height="16" viewBox="0 0 16 16"><path d="M.8 .8 h7 l3.4 3.4 V15.2 H.8z" fill="none" stroke="#b0b3b5" stroke-width="1.4"/><path d="M7.6 1 v3.4 h3.4" fill="none" stroke="#b0b3b5" stroke-width="1"/><rect x="5" y="10" width="2.6" height="5.6" fill="#e8624a"/><rect x="8.2" y="7.5" width="2.6" height="8.1" fill="#f0a732"/><rect x="11.4" y="5.5" width="2.6" height="10.1" fill="#62b543"/></svg>
<svg class="r" style="left:71px;top:263.75px;" width="16" height="16" viewBox="0 0 16 16"><path d="M14.300 10.300 A6.600 6.600 0 1 1 10.200 1.800" fill="none" stroke="#8fcf57" stroke-width="2"/><path d="M10.200 1.800 A6.600 6.600 0 0 1 14.500 5.800" fill="none" stroke="#2fae56" stroke-width="2"/><circle cx="8.300" cy="8" r="2.700" fill="#2fae56"/></svg>
<svg class="r" style="left:72.5px;top:285.5px;" width="16" height="16" viewBox="0 0 16 16"><path d="M.8 .8 h7 l3.4 3.4 V15.2 H.8z" fill="none" stroke="#b0b3b5" stroke-width="1.4"/><path d="M7.6 1 v3.4 h3.4" fill="none" stroke="#b0b3b5" stroke-width="1"/><rect x="5" y="10" width="2.6" height="5.6" fill="#e8624a"/><rect x="8.2" y="7.5" width="2.6" height="8.1" fill="#f0a732"/><rect x="11.4" y="5.5" width="2.6" height="10.1" fill="#62b543"/></svg>
<div class="r" style="left:25px;top:818px;width:285px;height:13px;background:#3c3f41;"></div>
<div class="r" style="left:25.5px;top:818.5px;width:243px;height:11px;background:#595b5d;border-radius:1px;"></div>
<div class="r" style="left:310px;top:106px;width:1px;height:726px;background:#323232;"></div>
<div class="r" style="left:311px;top:106px;width:1284px;height:24px;background:#3c3f41;"></div>
<div class="r" style="left:311px;top:130px;width:1284px;height:2px;background:#4b4f52;"></div>
<div class="r" style="left:859px;top:106px;width:135px;height:26px;background:#4e5254;"></div>
<svg class="r" style="left:320.5px;top:109.5px;" width="16" height="17" viewBox="0 0 16 17"><path d="M1.5 .8 h8 l3.7 3.7 V16 H1.5z" fill="#3c3f41" stroke="#a3a6a8" stroke-width="1.4"/><path d="M9.2 1 v3.8 h3.8" fill="none" stroke="#a3a6a8" stroke-width="1.1"/><rect x="0" y="5.2" width="15.5" height="7.2" fill="#f0a732"/><path d="M5.6 6.5 L3.2 8.8 L5.6 11.1 M9.6 6.5 L12 8.8 L9.6 11.1" fill="none" stroke="#7a5312" stroke-width="1.1"/></svg>
<span class="t" style="left:338.30px;top:109.15px;font-size:14.00px;line-height:18px;color:#bbb;letter-spacing:-0.497px;">splash_page.xml</span>
<svg class="r" style="left:442.5px;top:113px;" width="9" height="9" viewBox="0 0 9 9"><path d="M1 1 L8 8 M8 1 L1 8" stroke="#7e8183" stroke-width="1.5"/></svg>
<div class="r" style="left:458px;top:106px;width:1px;height:24px;background:#323232;"></div>
<svg class="r" style="left:467.5px;top:109.5px;" width="16" height="17" viewBox="0 0 16 17"><path d="M1.5 .8 h8 l3.7 3.7 V16 H1.5z" fill="#3c3f41" stroke="#a3a6a8" stroke-width="1.4"/><path d="M9.2 1 v3.8 h3.8" fill="none" stroke="#a3a6a8" stroke-width="1.1"/><rect x="0" y="5.2" width="15.5" height="7.2" fill="#f0a732"/><path d="M5.6 6.5 L3.2 8.8 L5.6 11.1 M9.6 6.5 L12 8.8 L9.6 11.1" fill="none" stroke="#7a5312" stroke-width="1.1"/></svg>
<span class="t" style="left:485.80px;top:109.15px;font-size:14.00px;line-height:18px;color:#bbb;letter-spacing:-0.241px;">colors.xml</span>
<svg class="r" style="left:553px;top:113px;" width="9" height="9" viewBox="0 0 9 9"><path d="M1 1 L8 8 M8 1 L1 8" stroke="#7e8183" stroke-width="1.5"/></svg>
<div class="r" style="left:569.5px;top:106px;width:1px;height:24px;background:#323232;"></div>
<svg class="r" style="left:578.5px;top:109.5px;" width="16" height="17" viewBox="0 0 16 17"><path d="M1.5 .8 h8 l3.7 3.7 V16 H1.5z" fill="#3c3f41" stroke="#a3a6a8" stroke-width="1.4"/><path d="M9.2 1 v3.8 h3.8" fill="none" stroke="#a3a6a8" stroke-width="1.1"/><rect x="0" y="5.2" width="15.5" height="7.2" fill="#f0a732"/><path d="M5.6 6.5 L3.2 8.8 L5.6 11.1 M9.6 6.5 L12 8.8 L9.6 11.1" fill="none" stroke="#7a5312" stroke-width="1.1"/></svg>
<span class="t" style="left:597.30px;top:109.15px;font-size:14.00px;line-height:18px;color:#bbb;letter-spacing:-0.128px;">AndroidManifest.xml</span>
<svg class="r" style="left:728.5px;top:113px;" width="9" height="9" viewBox="0 0 9 9"><path d="M1 1 L8 8 M8 1 L1 8" stroke="#7e8183" stroke-width="1.5"/></svg>
<div class="r" style="left:744px;top:106px;width:1px;height:24px;background:#323232;"></div>
<svg class="r" style="left:753.5px;top:109.5px;" width="16" height="17" viewBox="0 0 16 17"><path d="M1.5 .8 h8 l3.7 3.7 V16 H1.5z" fill="#3c3f41" stroke="#a3a6a8" stroke-width="1.4"/><path d="M9.2 1 v3.8 h3.8" fill="none" stroke="#a3a6a8" stroke-width="1.1"/><rect x="0" y="5.2" width="15.5" height="7.2" fill="#f0a732"/><path d="M5.6 6.5 L3.2 8.8 L5.6 11.1 M9.6 6.5 L12 8.8 L9.6 11.1" fill="none" stroke="#7a5312" stroke-width="1.1"/></svg>
<span class="t" style="left:771.80px;top:109.15px;font-size:14.00px;line-height:18px;color:#bbb;letter-spacing:-0.209px;">strings.xml</span>
<svg class="r" style="left:842.5px;top:113px;" width="9" height="9" viewBox="0 0 9 9"><path d="M1 1 L8 8 M8 1 L1 8" stroke="#7e8183" stroke-width="1.5"/></svg>
<div class="r" style="left:858.5px;top:106px;width:1px;height:24px;background:#323232;"></div>
<svg class="r" style="left:867.5px;top:110px;" width="16" height="16" viewBox="0 0 16 16"><circle cx="8" cy="8" r="7.6" fill="#9fd3f2"/><circle cx="8" cy="8" r="6.2" fill="#c4e5f7"/><path d="M10.6 5.9 a3.2 3.2 0 1 0 0 4.2" fill="none" stroke="#4a5560" stroke-width="1.4"/></svg>
<span class="t" style="left:886.80px;top:109.15px;font-size:14.00px;line-height:18px;color:#bbb;letter-spacing:-0.350px;">questions.java</span>
<svg class="r" style="left:978px;top:113px;" width="9" height="9" viewBox="0 0 9 9"><path d="M1 1 L8 8 M8 1 L1 8" stroke="#7e8183" stroke-width="1.5"/></svg>
<div class="r" style="left:994px;top:106px;width:1px;height:24px;background:#323232;"></div>
<svg class="r" style="left:1003px;top:109.5px;" width="16" height="17" viewBox="0 0 16 17"><path d="M1.5 .8 h8 l3.7 3.7 V16 H1.5z" fill="#3c3f41" stroke="#a3a6a8" stroke-width="1.4"/><path d="M9.2 1 v3.8 h3.8" fill="none" stroke="#a3a6a8" stroke-width="1.1"/><rect x="0" y="5.2" width="15.5" height="7.2" fill="#f0a732"/><path d="M5.6 6.5 L3.2 8.8 L5.6 11.1 M9.6 6.5 L12 8.8 L9.6 11.1" fill="none" stroke="#7a5312" stroke-width="1.1"/></svg>
<span class="t" style="left:1021.30px;top:109.15px;font-size:14.00px;line-height:18px;color:#bbb;letter-spacing:-0.298px;">activity_questions.xml</span>
<svg class="r" style="left:1157px;top:113px;" width="9" height="9" viewBox="0 0 9 9"><path d="M1 1 L8 8 M8 1 L1 8" stroke="#7e8183" stroke-width="1.5"/></svg>
<div class="r" style="left:1173.5px;top:106px;width:1px;height:24px;background:#323232;"></div>
<svg class="r" style="left:1182px;top:109.5px;" width="16" height="17" viewBox="0 0 16 17"><path d="M1.5 .8 h8 l3.7 3.7 V16 H1.5z" fill="#3c3f41" stroke="#a3a6a8" stroke-width="1.4"/><path d="M9.2 1 v3.8 h3.8" fill="none" stroke="#a3a6a8" stroke-width="1.1"/><rect x="0" y="5.2" width="15.5" height="7.2" fill="#f0a732"/><path d="M5.6 6.5 L3.2 8.8 L5.6 11.1 M9.6 6.5 L12 8.8 L9.6 11.1" fill="none" stroke="#7a5312" stroke-width="1.1"/></svg>
<span class="t" style="left:1200.80px;top:109.15px;font-size:14.00px;line-height:18px;color:#bbb;letter-spacing:-0.335px;">styles.xml</span>
<svg class="r" style="left:1265px;top:113px;" width="9" height="9" viewBox="0 0 9 9"><path d="M1 1 L8 8 M8 1 L1 8" stroke="#7e8183" stroke-width="1.5"/></svg>
<div class="r" style="left:1281.5px;top:106px;width:1px;height:24px;background:#323232;"></div>
<svg class="r" style="left:1290px;top:110px;" width="16" height="16" viewBox="0 0 16 16"><path d="M14.300 10.300 A6.600 6.600 0 1 1 10.200 1.800" fill="none" stroke="#8fcf57" stroke-width="2"/><path d="M10.200 1.800 A6.600 6.600 0 0 1 14.500 5.800" fill="none" stroke="#2fae56" stroke-width="2"/><circle cx="8.300" cy="8" r="2.700" fill="#2fae56"/></svg>
<span class="t" style="left:1308.30px;top:109.15px;font-size:14.00px;line-height:18px;color:#bbb;letter-spacing:-0.436px;">Crystalize</span>
<svg class="r" style="left:1371.5px;top:113px;" width="9" height="9" viewBox="0 0 9 9"><path d="M1 1 L8 8 M8 1 L1 8" stroke="#7e8183" stroke-width="1.5"/></svg>
<div class="r" style="left:1387.5px;top:106px;width:1px;height:24px;background:#323232;"></div>
<svg class="r" style="left:1396px;top:110px;" width="16" height="16" viewBox="0 0 16 16"><path d="M14.300 10.300 A6.600 6.600 0 1 1 10.200 1.800" fill="none" stroke="#8fcf57" stroke-width="2"/><path d="M10.200 1.800 A6.600 6.600 0 0 1 14.500 5.800" fill="none" stroke="#2fae56" stroke-width="2"/><circle cx="8.300" cy="8" r="2.700" fill="#2fae56"/></svg>
<span class="t" style="left:1415.30px;top:109.15px;font-size:14.00px;line-height:18px;color:#bbb;letter-spacing:0.247px;">app</span>
<svg class="r" style="left:1445.5px;top:113px;" width="9" height="9" viewBox="0 0 9 9"><path d="M1 1 L8 8 M8 1 L1 8" stroke="#7e8183" stroke-width="1.5"/></svg>
<div class="r" style="left:1462.5px;top:106px;width:1px;height:24px;background:#323232;"></div>
<svg class="r" style="left:1570px;top:111px;" width="20" height="13" viewBox="0 0 20 13"><path d="M0 4.5 h6 l-3 3.6z" fill="#8f9294"/><path d="M8 2 h9 M8 4.7 h9 M8 7.4 h9 M8 10 h9" stroke="#9a9da0" stroke-width="1.3"/></svg>
<span class="t" style="left:1587.50px;top:118.25px;font-size:6.50px;line-height:8px;color:#9a9da0;">1</span>
<div class="r" style="left:311px;top:132px;width:1284px;height:700px;background:#2b2b2b;"></div>
<div class="r" style="left:311px;top:132px;width:28px;height:700px;background:#313335;"></div>
<div class="r" style="left:339px;top:713.9px;width:1256px;height:18.9px;background:#323232;"></div>
<div class="r" style="left:339px;top:132px;width:1px;height:700px;background:#505254;"></div>
<div class="r" style="left:1175px;top:132px;width:1px;height:700px;background:#3a3a3a;"></div>
<div class="r" style="left:385px;top:132.5px;width:1px;height:112.5px;background:#343434;"></div>
<div class="r" style="left:418px;top:132.5px;width:1px;height:93.75px;background:#343434;"></div>
<div class="r" style="left:451px;top:132.5px;width:1px;height:75px;background:#343434;"></div>
<div class="r" style="left:385px;top:301.25px;width:1px;height:450px;background:#343434;"></div>
<div class="r" style="left:418px;top:395px;width:1px;height:300px;background:#343434;"></div>
<div class="r" style="left:451px;top:432.5px;width:1px;height:18.75px;background:#343434;"></div>
<div class="r" style="left:451px;top:526.25px;width:1px;height:56.25px;background:#343434;"></div>
<div class="r" style="left:451px;top:657.5px;width:1px;height:18.75px;background:#343434;"></div>
<div class="r" style="left:385px;top:807.5px;width:1px;height:24.375px;background:#343434;"></div>
<div class="r code" style="left:311px;top:132px;width:1284px;height:700px;overflow:hidden">
<div class="cl" style="top:3.05px;left:171.00px">EditText et = (EditText) findViewById(R.id.<span class="f i">answer</span>)<span class="k">;</span></div>
<div class="cl" style="top:21.80px;left:171.00px">et.setText(<span class="s">""</span>)<span class="k">;</span></div>
<div class="cl" style="top:59.30px;left:171.00px"><span class="f">done</span> = <span class="k">false;</span></div>
<div class="cl" style="top:78.05px;left:138.00px">}</div>
<div class="cl" style="top:96.80px;left:105.00px">}</div>
<div class="cl" style="top:115.55px;left:72.00px">}</div>
<div class="cl" style="top:153.05px;left:72.00px"><span class="k">public void </span><span class="m w">answersubmitted</span>() {</div>
<div class="cl" style="top:171.80px;left:105.00px">findViewById(R.id.<span class="f i">tickcross</span>).setVisibility(View.<span class="f i">VISIBLE</span>)<span class="k">;</span></div>
<div class="cl" style="top:190.55px;left:105.00px">TranslateAnimation animation = <span class="k">new </span>TranslateAnimation(<span class="n">0</span><span class="k">,</span><span class="n">0</span><span class="k">,</span><span class="n">2000</span><span class="k">,</span><span class="n">0</span>)<span class="k">;</span></div>
<div class="cl" style="top:209.30px;left:105.00px">animation.setDuration(<span class="n">1000</span>)<span class="k">;</span></div>
<div class="cl" style="top:228.05px;left:105.00px">animation.setInterpolator(getApplicationContext()<span class="k">, </span>android.R.anim.<span class="f i">bounce_interpolator</span>)<span class="k">;</span></div>
<div class="cl" style="top:246.80px;left:105.00px">animation.setAnimationListener(<span class="k">new </span>Animation.AnimationListener() {</div>
<div class="cl" style="top:265.55px;left:138.00px"><span class="a">@Override</span></div>
<div class="cl" style="top:284.30px;left:138.00px"><span class="k">public void </span><span class="m">onAnimationStart</span>(Animation animation) {</div>
<div class="cl" style="top:321.80px;left:138.00px">}</div>
<div class="cl" style="top:359.30px;left:138.00px"><span class="a">@Override</span></div>
<div class="cl" style="top:378.05px;left:138.00px"><span class="k">public void </span><span class="m">onAnimationEnd</span>(Animation animation) {</div>
<div class="cl" style="top:396.80px;left:171.00px">findViewById(R.id.<span class="f i">correctornot</span>).setVisibility(View.<span class="f i">VISIBLE</span>)<span class="k">;</span></div>
<div class="cl" style="top:415.55px;left:171.00px">findViewById(R.id.<span class="f i">nextbutton</span>).setVisibility(View.<span class="f i">VISIBLE</span>)<span class="k">;</span></div>
<div class="cl" style="top:453.05px;left:138.00px">}</div>
<div class="cl" style="top:490.55px;left:138.00px"><span class="a">@Override</span></div>
<div class="cl" style="top:509.30px;left:138.00px"><span class="k">public void </span><span class="m">onAnimationRepeat</span>(Animation animation) {</div>
<div class="cl" style="top:546.80px;left:138.00px">}</div>
<div class="cl" style="top:565.55px;left:105.00px">})<span class="k">;</span></div>
<div class="cl" style="top:584.30px;left:105.00px">findViewById(R.id.<span class="f i">tickcross</span>).startAnimation(animation)<span class="k">;</span></div>
<div class="cl" style="top:621.80px;left:72.00px">}</div>
<div class="cl" style="top:659.30px;left:72.00px"><span class="k">public void </span><span class="m">onAnswerClick</span>(View view) {</div>
<div class="cl" style="top:678.05px;left:105.00px"><span class="k">if </span>(<span class="f h">done</span><span class="h"> == </span><span class="k h">false</span>) {</div>
</div>
<svg class="r" style="left:334px;top:247.9px;" width="10.4" height="12.2" viewBox="0 0 10.4 12.2"><path d="M.5 11.700 h9.400 v-6.700 l-4.700 -4.500 l-4.700 4.500z" fill="#2b2b2b" stroke="#5a5d5f" stroke-width="1"/><path d="M2.800 7.900 h4.800" stroke="#5a5d5f" stroke-width="1"/></svg>
<svg class="r" style="left:334px;top:287.4px;" width="10.4" height="12.2" viewBox="0 0 10.4 12.2"><path d="M.5 .5 h9.400 v6.700 l-4.700 4.500 l-4.700 -4.500z" fill="#2b2b2b" stroke="#5a5d5f" stroke-width="1"/><path d="M2.800 4.300 h4.800" stroke="#5a5d5f" stroke-width="1"/></svg>
<svg class="r" style="left:334px;top:381.15px;" width="10.4" height="12.2" viewBox="0 0 10.4 12.2"><path d="M.5 .5 h9.400 v6.700 l-4.700 4.500 l-4.700 -4.500z" fill="#2b2b2b" stroke="#5a5d5f" stroke-width="1"/><path d="M2.800 4.300 h4.800" stroke="#5a5d5f" stroke-width="1"/></svg>
<svg class="r" style="left:334px;top:418.65px;" width="10.4" height="12.2" viewBox="0 0 10.4 12.2"><path d="M.5 .5 h9.400 v6.700 l-4.700 4.500 l-4.700 -4.500z" fill="#2b2b2b" stroke="#5a5d5f" stroke-width="1"/><path d="M2.800 4.300 h4.800" stroke="#5a5d5f" stroke-width="1"/></svg>
<svg class="r" style="left:334px;top:454.15px;" width="10.4" height="12.2" viewBox="0 0 10.4 12.2"><path d="M.5 11.700 h9.400 v-6.700 l-4.700 -4.500 l-4.700 4.500z" fill="#2b2b2b" stroke="#5a5d5f" stroke-width="1"/><path d="M2.800 7.900 h4.800" stroke="#5a5d5f" stroke-width="1"/></svg>
<svg class="r" style="left:334px;top:512.4px;" width="10.4" height="12.2" viewBox="0 0 10.4 12.2"><path d="M.5 .5 h9.400 v6.700 l-4.700 4.500 l-4.700 -4.500z" fill="#2b2b2b" stroke="#5a5d5f" stroke-width="1"/><path d="M2.800 4.300 h4.800" stroke="#5a5d5f" stroke-width="1"/></svg>
<svg class="r" style="left:334px;top:585.4px;" width="10.4" height="12.2" viewBox="0 0 10.4 12.2"><path d="M.5 11.700 h9.400 v-6.700 l-4.700 -4.500 l-4.700 4.500z" fill="#2b2b2b" stroke="#5a5d5f" stroke-width="1"/><path d="M2.800 7.900 h4.800" stroke="#5a5d5f" stroke-width="1"/></svg>
<svg class="r" style="left:334px;top:643.65px;" width="10.4" height="12.2" viewBox="0 0 10.4 12.2"><path d="M.5 .5 h9.400 v6.700 l-4.700 4.500 l-4.700 -4.500z" fill="#2b2b2b" stroke="#5a5d5f" stroke-width="1"/><path d="M2.800 4.300 h4.800" stroke="#5a5d5f" stroke-width="1"/></svg>
<svg class="r" style="left:334px;top:679.15px;" width="10.4" height="12.2" viewBox="0 0 10.4 12.2"><path d="M.5 11.700 h9.400 v-6.700 l-4.700 -4.500 l-4.700 4.500z" fill="#2b2b2b" stroke="#5a5d5f" stroke-width="1"/><path d="M2.800 7.900 h4.800" stroke="#5a5d5f" stroke-width="1"/></svg>
<svg class="r" style="left:334px;top:697.9px;" width="10.4" height="12.2" viewBox="0 0 10.4 12.2"><path d="M.5 11.700 h9.400 v-6.700 l-4.700 -4.500 l-4.700 4.500z" fill="#2b2b2b" stroke="#5a5d5f" stroke-width="1"/><path d="M2.800 7.900 h4.800" stroke="#5a5d5f" stroke-width="1"/></svg>
<svg class="r" style="left:334px;top:754.15px;" width="10.4" height="12.2" viewBox="0 0 10.4 12.2"><path d="M.5 11.700 h9.400 v-6.700 l-4.700 -4.500 l-4.700 4.500z" fill="#2b2b2b" stroke="#5a5d5f" stroke-width="1"/><path d="M2.800 7.900 h4.800" stroke="#5a5d5f" stroke-width="1"/></svg>
<svg class="r" style="left:334px;top:793.65px;" width="10.4" height="12.2" viewBox="0 0 10.4 12.2"><path d="M.5 .5 h9.400 v6.700 l-4.700 4.500 l-4.700 -4.500z" fill="#2b2b2b" stroke="#5a5d5f" stroke-width="1"/><path d="M2.800 4.300 h4.800" stroke="#5a5d5f" stroke-width="1"/></svg>
<svg class="r" style="left:312px;top:414.65px;" width="15" height="16" viewBox="0 0 15 16"><circle cx="5.100" cy="9.200" r="4.700" fill="#62b968"/><path d="M5.100 7 v4.400 M4 7 h2.200 M4 11.400 h2.200" stroke="#3f4a40" stroke-width="1.100"/><path d="M11.400 15 V3" stroke="#dd6251" stroke-width="1.500"/><path d="M8.800 4.900 L11.400 1.200 L14 4.900z" fill="#dd6251"/></svg>
<svg class="r" style="left:312px;top:508.4px;" width="15" height="16" viewBox="0 0 15 16"><circle cx="5.100" cy="9.200" r="4.700" fill="#62b968"/><path d="M5.100 7 v4.400 M4 7 h2.200 M4 11.400 h2.200" stroke="#3f4a40" stroke-width="1.100"/><path d="M11.400 15 V3" stroke="#dd6251" stroke-width="1.500"/><path d="M8.800 4.900 L11.400 1.200 L14 4.900z" fill="#dd6251"/></svg>
<svg class="r" style="left:312px;top:639.65px;" width="15" height="16" viewBox="0 0 15 16"><circle cx="5.100" cy="9.200" r="4.700" fill="#62b968"/><path d="M5.100 7 v4.400 M4 7 h2.200 M4 11.400 h2.200" stroke="#3f4a40" stroke-width="1.100"/><path d="M11.400 15 V3" stroke="#dd6251" stroke-width="1.500"/><path d="M8.800 4.900 L11.400 1.200 L14 4.900z" fill="#dd6251"/></svg>
<svg class="r" style="left:357px;top:712.5px;" width="14" height="16.5" viewBox="0 0 14 16.5"><path d="M7 .5 a6 6 0 0 1 3.2 11 v1 h-6.4 v-1 A6 6 0 0 1 7 .5z" fill="#f3b045"/><path d="M4.8 5.5 l1.4 3 l.8-1.6 l.8 1.6 l1.4-3" fill="none" stroke="#fde3ae" stroke-width=".9"/><path d="M4.2 13.5 h5.6 M4.8 15.2 h4.4" stroke="#b9bcbe" stroke-width="1.3"/></svg>
<svg class="r" style="left:482px;top:298.3px;" width="125" height="3" viewBox="0 0 125 3"><polyline points="0,0.5 1.5,2 3,0.5 4.5,2 6,0.5 7.5,2 9,0.5 10.5,2 12,0.5 13.5,2 15,0.5 16.5,2 18,0.5 19.5,2 21,0.5 22.5,2 24,0.5 25.5,2 27,0.5 28.5,2 30,0.5 31.5,2 33,0.5 34.5,2 36,0.5 37.5,2 39,0.5 40.5,2 42,0.5 43.5,2 45,0.5 46.5,2 48,0.5 49.5,2 51,0.5 52.5,2 54,0.5 55.5,2 57,0.5 58.5,2 60,0.5 61.5,2 63,0.5 64.5,2 66,0.5 67.5,2 69,0.5 70.5,2 72,0.5 73.5,2 75,0.5 76.5,2 78,0.5 79.5,2 81,0.5 82.5,2 84,0.5 85.5,2 87,0.5 88.5,2 90,0.5 91.5,2 93,0.5 94.5,2 96,0.5 97.5,2 99,0.5 100.5,2 102,0.5 103.5,2 105,0.5 106.5,2 108,0.5 109.5,2 111,0.5 112.5,2 114,0.5 115.5,2 117,0.5 118.5,2 120,0.5 121.5,2 123,0.5 124.5,2" fill="none" stroke="#5f8650" stroke-width="1"/></svg>
<div class="r" style="left:1581px;top:134px;width:7.5px;height:7.5px;background:#d19a1c;"></div>
<div class="r" style="left:1586px;top:439.5px;width:8.5px;height:193px;background:#4f5152;border-radius:2px;opacity:.95"></div>
<div class="r" style="left:1579.5px;top:626.5px;width:15.5px;height:1.4px;background:#b8901c;"></div>
<div class="r" style="left:1579.5px;top:689px;width:15.5px;height:1.4px;background:#b8901c;"></div>
<div class="r" style="left:1579.5px;top:736px;width:15.5px;height:1.4px;background:#b8901c;"></div>
<div class="r" style="left:25px;top:831px;width:1570px;height:2px;background:#2d2f31;"></div>
<div class="r" style="left:25px;top:833px;width:1570px;height:22px;background:#3c3f41;"></div>
<div class="r" style="left:25px;top:855px;width:1570px;height:1px;background:#323436;"></div>
<span class="t" style="left:28.00px;top:836.82px;font-size:11.50px;line-height:15px;color:#a5a8aa;letter-spacing:-0.010px;">Event Log</span>
<svg class="r" style="left:1546px;top:835.5px;" width="23" height="15" viewBox="0 0 23 15"><g transform="translate(7.500 7.500)" fill="#a9acae"><circle r="5"/><rect x="-1.500" y="-7.200" width="3" height="3.400" transform="rotate(0)"/><rect x="-1.500" y="-7.200" width="3" height="3.400" transform="rotate(45)"/><rect x="-1.500" y="-7.200" width="3" height="3.400" transform="rotate(90)"/><rect x="-1.500" y="-7.200" width="3" height="3.400" transform="rotate(135)"/><rect x="-1.500" y="-7.200" width="3" height="3.400" transform="rotate(180)"/><rect x="-1.500" y="-7.200" width="3" height="3.400" transform="rotate(225)"/><rect x="-1.500" y="-7.200" width="3" height="3.400" transform="rotate(270)"/><rect x="-1.500" y="-7.200" width="3" height="3.400" transform="rotate(315)"/><circle r="2" fill="#3c3f41"/></g><path d="M17.500 6.500 h5 l-2.500 3z" fill="#a9acae"/></svg>
<svg class="r" style="left:1575px;top:835.5px;" width="15" height="15" viewBox="0 0 15 15"><path d="M7.5 0 v8" stroke="#a9acae" stroke-width="1.3"/><path d="M4.5 6 L7.5 9.5 L10.5 6" fill="none" stroke="#a9acae" stroke-width="1.3"/><rect x="1.5" y="11.3" width="12" height="2.6" fill="#a9acae"/><rect x="8" y="12" width="4.5" height="1.2" fill="#3c3f41"/></svg>
<div class="r" style="left:25px;top:856px;width:31px;height:131px;background:#3c3f41;"></div>
<div class="r" style="left:56px;top:856px;width:1539px;height:131px;background:#2b2b2b;"></div>
<div class="r" style="left:0px;top:987px;width:1620px;height:1.5px;background:#2f3133;"></div>
<span class="t" style="left:56.30px;top:863.17px;font-size:8.75px;line-height:11px;color:#c8c8c8;font-family:'Liberation Mono',monospace;">13:11:55 Gradle sync started</span>
<span class="t" style="left:56.30px;top:881.92px;font-size:8.75px;line-height:11px;color:#c8c8c8;font-family:'Liberation Mono',monospace;">13:12:12 Platform and Plugin Updates: A new version of Android Studio is <i>available</i>! (<i>show balloon</i>)</span>
<span class="t" style="left:56.30px;top:900.67px;font-size:8.75px;line-height:11px;color:#c8c8c8;font-family:'Liberation Mono',monospace;">13:13:14 Gradle sync completed</span>
<span class="t" style="left:56.30px;top:919.42px;font-size:8.75px;line-height:11px;color:#c8c8c8;font-family:'Liberation Mono',monospace;">13:13:17 Executing tasks: [:app:generateDebugSources, :app:generateDebugAndroidTestSources]</span>
<span class="t" style="left:56.30px;top:938.17px;font-size:8.75px;line-height:11px;color:#c8c8c8;font-family:'Liberation Mono',monospace;">13:13:29 Gradle build finished in 14s 849ms</span>
<svg class="r" style="left:29px;top:860px;" width="20" height="21" viewBox="0 0 20 21"><path d="M18 6.2 a4.2 4.2 0 0 1 -5.6 4.6 L6.5 18.8 a1.6 1.6 0 0 1 -2.6 -2.2 L11 9.3 a4.2 4.2 0 0 1 4.2 -5.6 l-2 2.6 l1.2 2 l2.2 0.3 z" fill="#a8abad"/><path d="M5.2 3 l3.2 1.9 v3.7 l-3.2 1.9 l-3.2-1.9 v-3.7z" fill="none" stroke="#e8a33d" stroke-width="2"/></svg>
<div class="r" style="left:26.5px;top:885.3px;width:26.5px;height:26.5px;background:#54585a;border:1px solid #6a6e70;box-sizing:border-box;border-radius:2px;"></div>
<svg class="r" style="left:32px;top:890px;" width="17" height="17" viewBox="0 0 17 17"><path d="M3 1.2 h11 a2 2 0 0 1 2 2 v6.6 a2 2 0 0 1 -2 2 h-2 l.6 3.6 l-4.2 -3.6 H3 a2 2 0 0 1 -2 -2 V3.2 a2 2 0 0 1 2 -2z" fill="#3f6a8c" stroke="#3b9bdc" stroke-width="1.7"/></svg>
<svg class="r" style="left:31px;top:916px;" width="18" height="20" viewBox="0 0 18 20"><path d="M1 2.5 h3 M7 2.5 h9 M1 10 h9 M13 10 h3 M1 17.5 h3 M7 17.5 h9" stroke="#a9acae" stroke-width="1.4"/><path d="M10 5.5 h5 v-2.5 M8 14.5 h-5 v2.5" stroke="#3b9bdc" stroke-width="1.6" fill="none"/><path d="M10.5 3 l-3 2.5 l3 2.5z M7.5 12 l3 2.5 l-3 2.5z" fill="#3b9bdc"/></svg>
<svg class="r" style="left:31px;top:944px;" width="18" height="19" viewBox="0 0 18 19"><rect x="1" y="4.5" width="15" height="13" fill="#4a4d4f" stroke="#6a6d6f" stroke-width="1.6"/><path d="M12.5 0 v8" stroke="#6f7274" stroke-width="3"/><path d="M8 6.5 h9 l-4.5 5z" fill="#6f7274"/></svg>
<span class="t" style="left:36.50px;top:966.46px;font-size:16.00px;line-height:21px;color:#c4c4c4;">»</span>
<div class="r" style="left:0px;top:988px;width:1620px;height:24px;background:#3c3f41;"></div>
<div class="r" style="left:0px;top:1011.5px;width:1620px;height:1.5px;background:#454849;"></div>
<svg class="r" style="left:33px;top:992px;" width="15" height="16" viewBox="0 0 15 16"><circle cx="4.2" cy="4" r="3.2" fill="none" stroke="#e8e8e8" stroke-width="1.6"/><path d="M6.5 5.5 L12 9" stroke="#c4c7c9" stroke-width="2"/><path d="M4.5 10.5 a4 4 0 0 1 8 0 v3 h-8z" fill="#e9b47a"/><path d="M4 10 h9 v-1.5 a4.5 3.5 0 0 0 -9 0z" fill="#3b8fd1"/><path d="M6 15.5 h5" stroke="#8a5a2a" stroke-width="1"/></svg>
<span class="t" style="left:49.80px;top:991.35px;font-size:14.00px;line-height:18px;color:#bbb;letter-spacing:-0.897px;">TODO</span>
<svg class="r" style="left:110px;top:992.5px;" width="14.5" height="14.5" viewBox="0 0 16 16"><g fill="#97c024"><path d="M3.6 6.2 a4.4 4.2 0 0 1 8.8 0 z"/><rect x="3.6" y="6.8" width="8.8" height="6.2" rx="1"/><rect x="1.2" y="6.8" width="1.8" height="5" rx=".9"/><rect x="13" y="6.8" width="1.8" height="5" rx=".9"/><rect x="5.2" y="12" width="1.9" height="3.6" rx=".9"/><rect x="8.9" y="12" width="1.9" height="3.6" rx=".9"/><path d="M4.6 1.2 l1.2 1.8 M11.4 1.2 l-1.2 1.8" stroke="#97c024" stroke-width=".7"/></g><circle cx="6.2" cy="4.3" r=".55" fill="#3c3f41"/><circle cx="9.8" cy="4.3" r=".55" fill="#3c3f41"/></svg>
<span class="t" style="left:127.00px;top:991.35px;font-size:14.00px;line-height:18px;color:#bbb;letter-spacing:-0.234px;"><u>6</u>: Android Monitor</span>
<svg class="r" style="left:262px;top:993px;" width="14" height="14" viewBox="0 0 14 14"><rect x=".7" y=".7" width="12.6" height="12.6" fill="#f0c27a" stroke="#c9924a" stroke-width="1.2"/><path d="M3 4 h8 M3 6.5 h8 M3 9 h8 M3 11.2 h5" stroke="#a8753a" stroke-width="1"/></svg>
<span class="t" style="left:278.90px;top:991.35px;font-size:14.00px;line-height:18px;color:#bbb;letter-spacing:-0.897px;"><u>0</u>: Messages</span>
<svg class="r" style="left:372px;top:993.5px;" width="14" height="13" viewBox="0 0 14 13"><rect x=".6" y=".6" width="12.8" height="11.8" fill="#1e1f20" stroke="#a9acae" stroke-width="1.2"/><path d="M2.6 4 l2.6 2.2 l-2.6 2.2 M6.5 9.2 h4" stroke="#e6e6e6" stroke-width="1.1" fill="none"/></svg>
<span class="t" style="left:388.30px;top:991.35px;font-size:14.00px;line-height:18px;color:#bbb;letter-spacing:-0.288px;">Terminal</span>
<div class="r" style="left:1366px;top:988px;width:100.5px;height:24px;background:#2d2f30;"></div>
<svg class="r" style="left:1380px;top:993px;" width="14" height="13" viewBox="0 0 14 13"><path d="M1.5 .8 h11 a1 1 0 0 1 1 1 v6.4 a1 1 0 0 1 -1 1 h-4.5 l-3.5 3 v-3 h-3 a1 1 0 0 1 -1-1 V1.8 a1 1 0 0 1 1 -1z" fill="#5d6063"/></svg>
<span class="t" style="left:1398.30px;top:991.35px;font-size:14.00px;line-height:18px;color:#e6e6e6;letter-spacing:-0.661px;">Event Log</span>
<svg class="r" style="left:1480px;top:993px;" width="13" height="13" viewBox="0 0 13 13"><rect x=".7" y=".7" width="11.6" height="11.6" fill="#45749c" stroke="#5aa0d8" stroke-width="1.3"/><rect x="2.5" y="3" width="8" height="2" fill="#a9d0ee"/><rect x="3" y="6.5" width="7" height="4.5" fill="#6f7a84"/></svg>
<span class="t" style="left:1496.30px;top:991.35px;font-size:14.00px;line-height:18px;color:#bbb;letter-spacing:-0.634px;">Gradle Console</span>
<div class="r" style="left:0px;top:1013px;width:1620px;height:23px;background:#3c3f41;"></div>
<svg class="r" style="left:3.5px;top:1015px;" width="17" height="17.5" viewBox="0 0 17 17.5"><rect x="1" y="1" width="15.200" height="12.600" fill="#5d5f61" stroke="#8e9193" stroke-width="1.100"/><rect x=".5" y="15.200" width="16.200" height="1.800" fill="#8e9193"/></svg>
<span class="t" style="left:28.60px;top:1015.15px;font-size:14.00px;line-height:18px;color:#bbb;letter-spacing:-0.268px;">Gradle build finished in 14s 849ms (a minute ago)</span>
<span class="t" style="left:1277.80px;top:1015.15px;font-size:14.00px;line-height:18px;color:#a5a8aa;letter-spacing:-0.287px;">87:1</span>
<span class="t" style="left:1314.30px;top:1015.15px;font-size:14.00px;line-height:18px;color:#a5a8aa;letter-spacing:-1.615px;">CRLF</span>
<span class="t" style="left:1359.30px;top:1015.15px;font-size:14.00px;line-height:18px;color:#a5a8aa;letter-spacing:-0.512px;">UTF-8</span>
<span class="t" style="left:1410.30px;top:1015.15px;font-size:14.00px;line-height:18px;color:#8a8d8f;letter-spacing:-0.137px;">Context: &lt;no context&gt;</span>
<svg class="r" style="left:1347px;top:1019px;" width="6" height="11" viewBox="0 0 6 11"><path d="M3 0 L6 4 H0z M3 11 L6 7 H0z" fill="#a9acae"/></svg>
<svg class="r" style="left:1399px;top:1019px;" width="6" height="11" viewBox="0 0 6 11"><path d="M3 0 L6 4 H0z M3 11 L6 7 H0z" fill="#a9acae"/></svg>
<svg class="r" style="left:1571.5px;top:1018px;" width="12" height="12" viewBox="0 0 12 12"><path d="M1.800 5.300 V3.800 a2.400 2.400 0 0 1 4.800 -.3 V5" fill="none" stroke="#a9acae" stroke-width="1.500"/><rect x="3.300" y="5" width="7.700" height="6.200" rx=".8" fill="#a9acae"/><path d="M5.700 6.800 h3 M7.200 6.800 v2.800" stroke="#3c3f41" stroke-width="1.100"/></svg>
<svg class="r" style="left:1597px;top:1015.5px;" width="17" height="18.5" viewBox="0 0 17 18.5"><g fill="none" stroke="#8f9294" stroke-width="1.100"><path d="M4.500 5.800 Q4.500 1.300 8.500 1.300 Q12.500 1.300 12.500 5.800z" fill="#5a5d5f"/><path d="M1.800 6.300 H15.200"/><path d="M4.800 7 V10 Q4.800 13.600 8.500 13.600 Q12.200 13.600 12.200 10 V7"/><path d="M5.800 11.300 Q8.500 9.300 11.200 11.300" stroke-width="1.500"/><path d="M2 18 Q2 14.300 6.200 13.500 M15 18 Q15 14.300 10.800 13.500"/><rect x="7.500" y="2.800" width="2" height="2" fill="#8f9294" stroke="none"/><path d="M6.300 8.500 h1 M9.700 8.500 h1"/></g></svg>
<div class="r" style="left:0px;top:1035px;width:1620px;height:45px;background:linear-gradient(90deg,#28425a 0,#28425a 441px,#27435b 560px,#24405a 800px,#203c58 905px,#1f3b57 924px,#1a3651 926px,#102e4c 1000px,#08253f 1060px,#06233f 1125px,#0a2a4c 1170px,#0a2a4c 1215px,#11304f 1240px,#1b3c5b 1330px,#1a3a57 1480px,#15324d 1502px,#1e3c57 1530px,#1f3d58 1620px);"></div>
<div class="r" style="left:0px;top:1035px;width:54px;height:45px;background:linear-gradient(125deg,#1a3650 0,#264259 35%,#1e3b55 55%,#2a475f 75%,#1b3751 100%);"></div>
<svg class="r" style="left:18px;top:1048px;" width="18.5" height="18.7" viewBox="0 0 18.5 18.7"><path d="M0 2.7 L7.8 1.6 V9 H0z M8.8 1.5 L19 0 V9 H8.8z M0 10 H7.8 V17.4 L0 16.3z M8.8 10 H19 V19 L8.8 17.5z" fill="#fff"/></svg>
<div class="r" style="left:54px;top:1035px;width:387px;height:45px;background:#344b60;"></div>
<svg class="r" style="left:63px;top:1044px;" width="27" height="27" viewBox="0 0 27 27"><circle cx="13.300" cy="13.400" r="10.600" fill="none" stroke="#fff" stroke-width="2.900"/></svg>
<span class="t" style="left:94.50px;top:1047.96px;font-size:16.00px;line-height:21px;color:#acb6c1;letter-spacing:-0.092px;">Ask me anything</span>
<svg class="r" style="left:411px;top:1048px;" width="12" height="20" viewBox="0 0 12 20"><rect x="3" y=".7" width="6" height="11.5" rx="3" fill="none" stroke="#b9c2ca" stroke-width="1.3"/><path d="M.7 8.5 v1.5 a5.3 5.3 0 0 0 10.6 0 v-1.5 M6 15.5 v3 M3 18.7 h6" fill="none" stroke="#b9c2ca" stroke-width="1.3"/></svg>
<span class="t" style="left:441.80px;top:1034.48px;font-size:24.00px;line-height:31px;color:#10233a;font-weight:bold;letter-spacing:-0.030px;text-decoration:underline;text-decoration-thickness:2px;text-underline-offset:3px;">r You?</span>
<svg class="r" style="left:456px;top:1049px;" width="24" height="18" viewBox="0 0 24 18"><rect x="5" y="1.5" width="14" height="14" fill="none" stroke="#fff" stroke-width="1.5"/><path d="M3 3.5 H1 V13.5 H3 M21 3.5 h2 v10 h-2" fill="none" stroke="#fff" stroke-width="1.2"/></svg>
<svg class="r" style="left:508px;top:1044px;" width="26" height="27" viewBox="0 0 26 27"><path d="M21.500 12.700 H6.500" stroke="#0078d7" stroke-width="4.600" fill="none"/><path d="M21.400 14.800 A8.800 9.500 0 1 0 19.300 21.600" stroke="#0078d7" stroke-width="5.200" fill="none"/><path d="M.8 12.500 C2.500 6.500 7.500 2.500 13 2 C8.500 4 5.500 8 4.800 13.500z" fill="#0078d7"/></svg>
<svg class="r" style="left:553px;top:1047px;" width="25" height="21" viewBox="0 0 25 21"><path d="M.8 1.500 h8.500 l1.800 1.700 h12.700 v4 H.8z" fill="#f5cf4a"/><rect x=".8" y="3.200" width="23.400" height="16.800" rx=".8" fill="#ffe68c"/><path d="M.8 1.500 h8.500 l1.500 1.700 H.8z" fill="#f5cf4a"/><path d="M4.700 20.600 v-9.900 h15.300 v9.900 h-3.800 v-6 h-7.500 v6z" fill="#3ab0ea"/></svg>
<svg class="r" style="left:598px;top:1042px;" width="26" height="29" viewBox="0 0 26 29"><path d="M8 9 V6 a5 5 0 0 1 10 0 V9" fill="none" stroke="#fff" stroke-width="1.3"/><path d="M1.5 8.5 L24.5 7 V27.5 L1.5 25z" fill="#fff"/><path d="M7 14.2 l5-.5 v4.3 h-5z M13 13.6 l6-.6 v5 h-6z M7 19 h5 v4.4 l-5-.5z M13 19 h6 v5.2 l-6-.7z" fill="#24405a"/></svg>
<svg class="r" style="left:642px;top:1045px;" width="26" height="25" viewBox="0 0 26 25"><path d="M9 1 L24 3.5 L20 23 L3 21z" fill="#bfe3ef"/><path d="M9 1 L24 3.5 L23 8 L8 5.5z" fill="#5fb2cc"/><path d="M3 21 L20 23 L24 3.5 L26 6 L22 25 L5 23.5z" fill="#d9c9a0"/><path d="M4 20 L9 1 L13 1.8 L9 20.6z" fill="#8fcfe0"/></svg>
<svg class="r" style="left:686px;top:1044px;" width="27" height="27" viewBox="0 0 27 27"><circle cx="13.5" cy="13.5" r="13.3" fill="#15386a"/><circle cx="13.5" cy="13.5" r="13.3" fill="url(#sg)"/><defs><linearGradient id="sg" x1="0" y1="0" x2="0" y2="1"><stop offset="0" stop-color="#10244a"/><stop offset="1" stop-color="#1c6fb0"/></linearGradient></defs><circle cx="17.5" cy="9.5" r="4.2" fill="none" stroke="#e8edf2" stroke-width="2"/><circle cx="17.5" cy="9.5" r="1.8" fill="#e8edf2"/><path d="M14 12.5 L9 17" stroke="#e8edf2" stroke-width="3"/><circle cx="8" cy="18" r="3" fill="none" stroke="#e8edf2" stroke-width="1.6"/><path d="M0.5 13.5 L6 16.5" stroke="#e8edf2" stroke-width="3"/></svg>
<svg class="r" style="left:731px;top:1044px;" width="28" height="28" viewBox="0 0 28 28"><path d="M3 16 C2 8 9 3.5 16 4.5 C23 5.5 25 11 22 15 C20 18 17 15.5 15.5 18 C14 20.5 17 22 14 24 C9 26 4 22 3 16z" fill="#dfe4e8"/><circle cx="8" cy="12" r="1.9" fill="#e04a3a"/><circle cx="12.5" cy="8.5" r="1.9" fill="#4ab04a"/><circle cx="18" cy="9" r="1.9" fill="#e8c53a"/><circle cx="7.5" cy="17.5" r="1.9" fill="#3a7fd8"/><path d="M14 25 L23 5" stroke="#d98a3a" stroke-width="2.2"/><path d="M22.3 6.5 L25.5 .5 L24.5 7.5z" fill="#b06a2a"/></svg>
<svg class="r" style="left:781px;top:1044px;" width="19" height="28" viewBox="0 0 19 28"><rect x=".8" y=".8" width="17.4" height="26.4" fill="#fff"/><rect x="3" y="3" width="13" height="4.5" fill="#24405a"/><g fill="#24405a"><path d="M4 10.5h3l-.8 3h-3z M8.5 10.5h3l-.8 3h-3z M13 10.5h3l-.8 3h-3z M4 15.3h3l-.8 3h-3z M8.5 15.3h3l-.8 3h-3z M13 15.3h3l-.8 3h-3z M4 20.2h3l-.8 3h-3z M8.5 20.2h3l-.8 3h-3z M13 20.2h3l-.8 3h-3z"/></g></svg>
<svg class="r" style="left:822px;top:1045px;" width="27" height="23" viewBox="0 0 27 23"><path d="M0 7 L13.5 0 L27 7 V22 H0z" fill="#fff"/><path d="M2 8.5 L24 10.5 L15 15 L19 19z" fill="#24405a"/></svg>
<svg class="r" style="left:868px;top:1044px;" width="26" height="26" viewBox="0 0 26 26"><circle cx="13" cy="13" r="12.8" fill="#1ed760"/><path d="M5.5 9 Q13 6.5 20.5 10.2 M6.5 13.2 Q13 11.2 19.3 14.3 M7.5 17.2 Q13 15.6 18 18.2" fill="none" stroke="#14251c" stroke-width="2.3" stroke-linecap="round"/></svg>
<svg class="r" style="left:911px;top:1048px;" width="28" height="22" viewBox="0 0 28 22"><path d="M2 7 C6 3 10 5 13 6 C16 3 20 1 22 2 C22 7 21 10 19 13 C15 17 8 16 5 13 C2 12 0 10 2 7z" fill="#7a7468"/><circle cx="9" cy="7.5" r="2.5" fill="#fff"/><circle cx="14" cy="7" r="2.5" fill="#fff"/><circle cx="9.5" cy="7.8" r="1" fill="#111"/><circle cx="14.3" cy="7.3" r="1" fill="#111"/><ellipse cx="4" cy="11" rx="2.4" ry="1.8" fill="#222"/><path d="M14 13 L26 20" stroke="#d9903a" stroke-width="2.2"/></svg>
<svg class="r" style="left:957px;top:1044px;" width="25" height="27" viewBox="0 0 25 27"><path d="M1 5 h23 v21 h-23z" fill="none" stroke="#fff" stroke-width="1.8"/><path d="M1 5 h23 v5 h-23z" fill="#fff"/><path d="M6 1 v6 M19 1 v6" stroke="#fff" stroke-width="2.6"/><g fill="#fff"><rect x="9.5" y="12" width="3" height="3"/><rect x="14" y="12" width="3" height="3"/><rect x="18.500" y="12" width="3" height="3"/><rect x="5" y="16.500" width="3" height="3"/><rect x="9.5" y="16.500" width="3" height="3"/><rect x="14" y="16.500" width="3" height="3"/><rect x="18.500" y="16.500" width="3" height="3"/><rect x="5" y="21" width="3" height="3"/><rect x="9.5" y="21" width="3" height="3"/><rect x="14" y="21" width="3" height="3"/></g></svg>
<div class="r" style="left:1000.5px;top:1044px;width:27px;height:27px;background:#fff;"></div>
<span class="t" style="left:1001.30px;top:1050.67px;font-size:12.50px;line-height:16px;color:#5fcfd6;letter-spacing:0.491px;">B4A</span>
<svg class="r" style="left:1045px;top:1043px;" width="26" height="28" viewBox="0 0 26 28"><path d="M1.300 13.600 L21.500 1.500 C25 8 25 19 21.500 26 Z" fill="#fff" stroke="#1d1d1f" stroke-width="2.200" stroke-linejoin="round"/><path d="M1.300 13.600 H16.500 M16.500 13.600 L22 1.800 M16.500 13.600 L22 25.600" stroke="#1d1d1f" stroke-width="2.200" fill="none"/></svg>
<svg class="r" style="left:1090px;top:1046px;" width="26" height="24" viewBox="0 0 26 24"><rect x="11" y="2.5" width="14" height="19" fill="#fff" stroke="#1f7244" stroke-width="1"/><path d="M13 6 h10 M13 9 h10 M13 12 h10 M13 15 h10 M13 18 h10 M17 3 v18 M21 3 v18" stroke="#1f7244" stroke-width="1"/><path d="M0 2.500 L15 0 V24 L0 21.500z" fill="#1f7244"/><path d="M4.500 7.500 L10.500 16.500 M10.500 7.500 L4.500 16.500" stroke="#fff" stroke-width="2"/></svg>
<div class="r" style="left:1126px;top:1035px;width:42.5px;height:45px;background:#0c4780;"></div>
<svg class="r" style="left:1132px;top:1042px;" width="28" height="32" viewBox="0 0 28 32"><circle cx="14" cy="14" r="11.700" fill="#8bc34a"/><path d="M14 9.500 L5 28.500 M14 9.500 L23 28.500" stroke="#ececec" stroke-width="2.400" fill="none"/><path d="M7.800 18 Q14 24 20.200 18" stroke="#ececec" stroke-width="1.800" fill="none"/><rect x="13" y="4.500" width="2" height="9" fill="#6b6f66"/><circle cx="14" cy="10" r="2.800" fill="#6b6f66"/></svg>
<svg class="r" style="left:1178px;top:1046px;" width="26" height="24" viewBox="0 0 26 24"><rect x="11" y="2.500" width="14" height="19" fill="#fff" stroke="#2a5699" stroke-width="1"/><path d="M16 6 h7 M16 8.500 h7 M16 11 h7 M16 13.500 h7 M16 16 h7 M16 18.500 h7" stroke="#2a5699" stroke-width="1.200"/><path d="M0 2.500 L15 0 V24 L0 21.500z" fill="#2a5699"/><path d="M3 8 L5 16 L7.500 9.500 L10 16 L12 8" stroke="#fff" stroke-width="1.600" fill="none"/></svg>
<div class="r" style="left:638px;top:1078px;width:24px;height:2px;background:#9bcaf0;"></div>
<div class="r" style="left:862px;top:1078px;width:35.5px;height:2px;background:#9bcaf0;"></div>
<div class="r" style="left:1126px;top:1078px;width:42.5px;height:2px;background:#9bcaf0;"></div>
<div class="r" style="left:1174.5px;top:1078px;width:28.5px;height:2px;background:#9bcaf0;"></div>
<div class="r" style="left:664px;top:1078px;width:9px;height:2px;background:#6f97ba;"></div>
<div class="r" style="left:1204px;top:1078px;width:6px;height:2px;background:#6f97ba;"></div>
<div class="r" style="left:1216.5px;top:1035px;width:20px;height:45px;background:#fff;"></div>
<svg class="r" style="left:1221px;top:1040px;" width="11" height="36" viewBox="0 0 11 36"><path d="M.8 9 L5.500 3.300 L10.200 9 M.8 27 L5.500 32.700 L10.200 27" fill="none" stroke="#3a3a3a" stroke-width="1.500"/></svg>
<svg class="r" style="left:1247px;top:1051px;" width="15" height="10" viewBox="0 0 15 10"><path d="M1 8.500 L7.500 1.500 L14 8.500" fill="none" stroke="#fff" stroke-width="1.400"/></svg>
<svg class="r" style="left:1280px;top:1048px;" width="19" height="18" viewBox="0 0 19 18"><path d="M1 6.500 h3 l4.500 -4.500 v14 l-4.500 -4.500 h-3z" fill="none" stroke="#fff" stroke-width="1.200"/><path d="M11 6.500 q1.600 2.500 0 5 M13.500 4.500 q3 4.500 0 9 M16 2.500 q4.400 6.500 0 13" fill="none" stroke="#fff" stroke-width="1.100"/></svg>
<svg class="r" style="left:1316px;top:1050px;" width="20" height="14" viewBox="0 0 20 14"><rect x="4" y="4.500" width="14" height="8.500" fill="#fff"/><rect x="18" y="6.500" width="1.500" height="4" fill="#fff"/><path d="M2.500 0 v3 M5 0 v3 M1.500 3 h4.500 v2 a2.200 2.200 0 0 1 -4.500 0z M3.700 7 v3 h2" stroke="#fff" stroke-width="1" fill="none"/></svg>
<svg class="r" style="left:1354px;top:1045px;" width="26" height="26" viewBox="0 0 26 26"><path d="M18 2 L21 4.500 L8.500 22 L5 23.500 L5.500 19.500z M16.500 4 L19.500 6.500" fill="none" stroke="#fff" stroke-width="1.300"/><path d="M6 23 C1 24 1 18 6 16.500 M13 14.500 C19 12 24 15 21.500 18 C19.500 20 16 18.500 14 17" fill="none" stroke="#fff" stroke-width="1.300"/></svg>
<svg class="r" style="left:1398px;top:1049px;" width="27" height="17" viewBox="0 0 27 17"><rect x=".7" y=".7" width="25.600" height="15.600" rx="1.500" fill="none" stroke="#fff" stroke-width="1.200"/><path d="M3.500 4.500 h20 M3.500 8 h20" stroke="#fff" stroke-width="1.300" stroke-dasharray="1.500 1.300"/><path d="M3.500 12 h2 M7.500 12 h12 M21.500 12 h2" stroke="#fff" stroke-width="1.300"/></svg>
<span class="t" style="left:1440.80px;top:1049.48px;font-size:14.50px;line-height:19px;color:#fff;letter-spacing:-1.440px;">ENG</span>
<span class="t" style="left:1499.80px;top:1037.60px;font-size:15.00px;line-height:20px;color:#f4f6f8;letter-spacing:-0.687px;">13:15</span>
<span class="t" style="left:1481.30px;top:1057.80px;font-size:15.00px;line-height:20px;color:#f4f6f8;letter-spacing:-0.397px;">04/07/2016</span>
<svg class="r" style="left:1577px;top:1049px;" width="22" height="22" viewBox="0 0 22 22"><path d="M.8 .8 h18.400 v13.400 h-9 l-4.500 4.500 v-4.500 h-5z" fill="#fff"/><path d="M4 4.500 h12 M4 7.500 h12 M4 10.500 h7" stroke="#1a3a5a" stroke-width="1.100"/><circle cx="15.500" cy="15" r="4" fill="#1a3a5a" stroke="#fff" stroke-width="1.200"/><path d="M14 13.500 a2.300 2.300 0 1 0 3 2" stroke="#fff" fill="none" stroke-width="1"/></svg>
<div class="r" style="left:1614px;top:1035px;width:1px;height:45px;background:#6f8499;"></div>
</body></html>
